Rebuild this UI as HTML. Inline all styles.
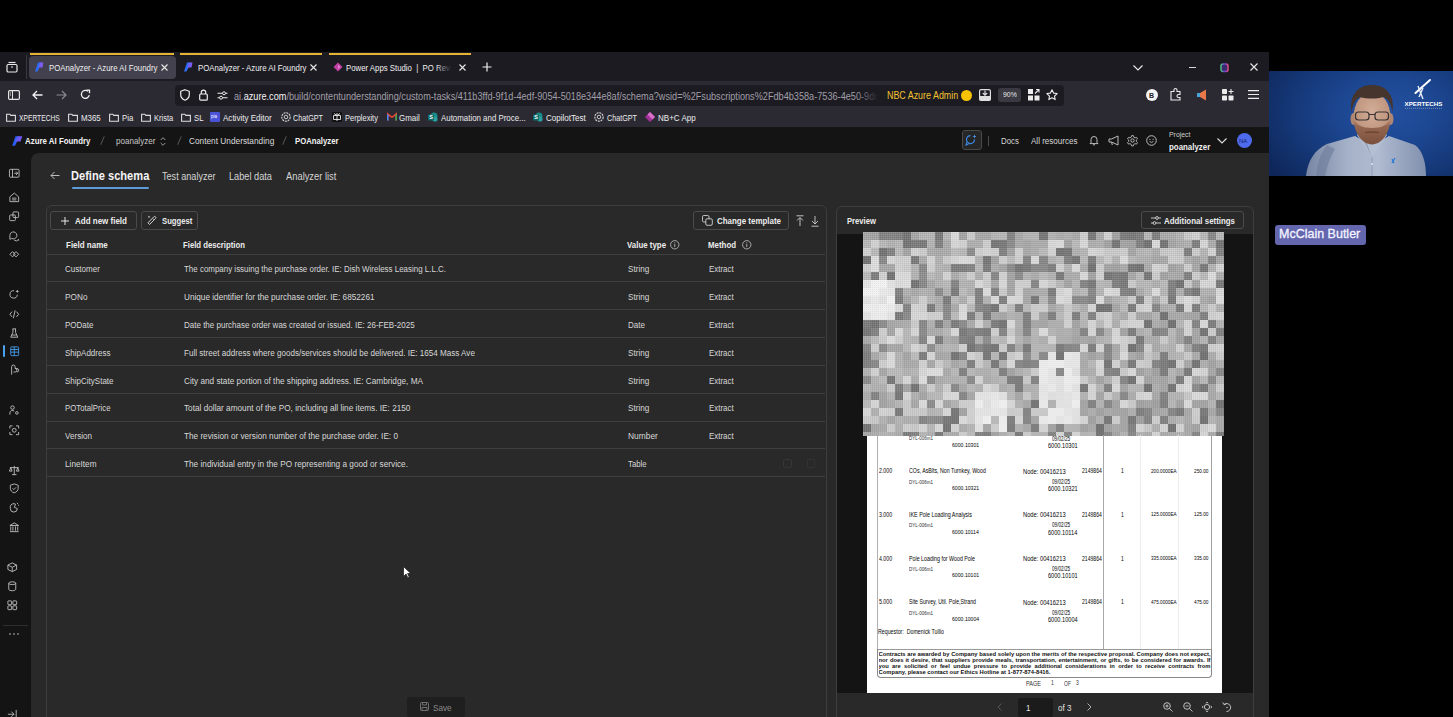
<!DOCTYPE html>
<html><head><meta charset="utf-8">
<style>
*{margin:0;padding:0;box-sizing:border-box}
html,body{width:1453px;height:717px;overflow:hidden;background:#000;font-family:"Liberation Sans",sans-serif;color:#d6d6d6}
.a{position:absolute}
.t{position:absolute;white-space:nowrap;line-height:1;transform-origin:0 50%}
svg{position:absolute;overflow:visible}
.card{position:absolute;border:1px solid #3e3e3e;border-radius:6px;background:#292929}
.btn{position:absolute;border:1px solid #4a4a4a;border-radius:3px}
</style></head><body>
<div class="a" style="left:0px;top:52px;width:1269px;height:29px;background:#1c1b22;"></div>
<div class="a" style="left:0px;top:81px;width:1269px;height:46px;background:#2b2a33;"></div>
<div class="a" style="left:0px;top:127px;width:1269px;height:40px;background:#141414;"></div>
<div class="a" style="left:0px;top:153px;width:31px;height:564px;background:#141414;"></div>
<div class="a" style="left:31px;top:153px;width:1238px;height:564px;background:#292929;border-top-left-radius:8px"></div>
<div class="a" style="left:0px;top:52px;width:27px;height:29px;background:#1a1920;"></div>
<div class="a" style="left:26px;top:55px;width:1px;height:24px;background:#3a3940;"></div>
<svg style="left:6px;top:61px" width="12" height="12" viewBox="0 0 12 12"><rect x="1" y="3.5" width="10" height="7.5" rx="1.2" fill="none" stroke="#e6e6e6" stroke-width="1.2"/><path d="M2.5 1.5h7" stroke="#e6e6e6" stroke-width="1.2"/><path d="M5 6h2" stroke="#e6e6e6" stroke-width="1.2"/></svg>
<div class="a" style="left:29px;top:56px;width:147px;height:23px;background:#42414d;border-radius:4px"></div>
<div class="a" style="left:30px;top:53px;width:144px;height:2px;background:#e5b334;"></div>
<div class="a" style="left:180px;top:53px;width:142px;height:2px;background:#e5b334;"></div>
<div class="a" style="left:329px;top:53px;width:142px;height:2px;background:#e5b334;"></div>
<svg style="left:35px;top:62px" width="10" height="10" viewBox="0 0 10 10"><path d="M3 0.5h4l-4.5 9h-2.5z" fill="#2f6cf6"/><path d="M5 0.5h3.5l-1 5h-4z" fill="#7b5cf0"/></svg>
<div class="t" style="left:48.5px;top:64px;font-size:9.00px;font-weight:400;color:#f0f0f0;transform:scaleX(0.8666666666666667);">POAnalyzer - Azure AI Foundry</div>
<svg style="left:161px;top:64px" width="7" height="7" viewBox="0 0 7 7"><path d="M0.5 0.5l6 6M6.5 0.5l-6 6" stroke="#e8e8e8" stroke-width="1.1"/></svg>
<svg style="left:184px;top:62px" width="10" height="10" viewBox="0 0 10 10"><path d="M3 0.5h4l-4.5 9h-2.5z" fill="#2f6cf6"/><path d="M5 0.5h3.5l-1 5h-4z" fill="#7b5cf0"/></svg>
<div class="t" style="left:197.5px;top:64px;font-size:9.00px;font-weight:400;color:#f0f0f0;transform:scaleX(0.8666666666666667);">POAnalyzer - Azure AI Foundry</div>
<svg style="left:310px;top:64px" width="7" height="7" viewBox="0 0 7 7"><path d="M0.5 0.5l6 6M6.5 0.5l-6 6" stroke="#e8e8e8" stroke-width="1.1"/></svg>
<svg style="left:333px;top:62px" width="10" height="10" viewBox="0 0 10 10"><path d="M5 0.5l4.5 4.5-4.5 4.5-4.5-4.5z" fill="#c03fa0"/><path d="M5 2.5l2.5 2.5-2.5 2.5z" fill="#e27ad0"/></svg>
<div class="t" style="left:346px;top:64px;font-size:9.00px;font-weight:400;color:#f0f0f0;transform:scaleX(0.8666666666666667);width:125px;overflow:hidden">Power Apps Studio &nbsp;|&nbsp; PO Review</div>
<div class="a" style="left:436px;top:57px;width:22px;height:20px;background:linear-gradient(90deg,rgba(28,27,34,0),#1c1b22 70%);"></div>
<svg style="left:459px;top:64px" width="7" height="7" viewBox="0 0 7 7"><path d="M0.5 0.5l6 6M6.5 0.5l-6 6" stroke="#e8e8e8" stroke-width="1.1"/></svg>
<svg style="left:482px;top:62px" width="10" height="10" viewBox="0 0 10 10"><path d="M5 0.5v9M0.5 5h9" stroke="#f0f0f0" stroke-width="1.2"/></svg>
<svg style="left:1133px;top:64.5px" width="9" height="5.5" viewBox="0 0 9 5.5"><path d="M0.5 0.5l4.5 4.5 4.5-4.5" fill="none" stroke="#e8e8e8" stroke-width="1.2"/></svg>
<div class="a" style="left:1189px;top:66.5px;width:7px;height:1.2px;background:#d8d8d8;"></div>
<svg style="left:1219.5px;top:62.5px" width="9" height="9" viewBox="0 0 9 9"><defs><linearGradient id="rg" x1="0" y1="0" x2="1" y2="0"><stop offset="0" stop-color="#50d080"/><stop offset="0.5" stop-color="#6040e0"/><stop offset="1" stop-color="#f05080"/></linearGradient></defs><rect x="1" y="1" width="7" height="7.5" rx="2" fill="#3a2a70" stroke="url(#rg)" stroke-width="1.4"/></svg>
<svg style="left:1250px;top:63px" width="8" height="8" viewBox="0 0 8 8"><path d="M0.5 0.5l7 7M7.5 0.5l-7 7" stroke="#e8e8e8" stroke-width="1.1"/></svg>
<svg style="left:8px;top:90px" width="12" height="10" viewBox="0 0 12 10"><rect x="0.6" y="0.6" width="10.8" height="8.8" rx="1.2" fill="none" stroke="#e6e6e6" stroke-width="1.2"/><path d="M4.5 1v8M2 3h1M2 5h1" stroke="#e6e6e6" stroke-width="1"/></svg>
<svg style="left:32px;top:90px" width="11" height="10" viewBox="0 0 11 10"><path d="M10.5 5H1M5 1L1 5l4 4" fill="none" stroke="#f2f2f2" stroke-width="1.3"/></svg>
<svg style="left:56px;top:90px" width="11" height="10" viewBox="0 0 11 10"><path d="M0.5 5H10M6 1l4 4-4 4" fill="none" stroke="#8a8990" stroke-width="1.2"/></svg>
<svg style="left:80px;top:89px" width="11" height="11" viewBox="0 0 11 11"><path d="M9.3 6.2A4 4 0 1 1 8 2.3" fill="none" stroke="#f0f0f0" stroke-width="1.3"/><path d="M6.5 1.2h3v3" fill="none" stroke="#f0f0f0" stroke-width="1.3"/></svg>
<div class="a" style="left:175px;top:85px;width:889px;height:21px;background:#1c1b22;border-radius:4px"></div>
<svg style="left:180px;top:89px" width="10" height="12" viewBox="0 0 10 12"><path d="M5 0.7L9.3 2.3V5.5C9.3 8.3 7.3 10.3 5 11.2 2.7 10.3 0.7 8.3 0.7 5.5V2.3z" fill="none" stroke="#ececec" stroke-width="1.2"/></svg>
<svg style="left:199px;top:89px" width="9" height="12" viewBox="0 0 9 12"><rect x="0.7" y="5" width="7.6" height="6.2" rx="1" fill="none" stroke="#ececec" stroke-width="1.2"/><path d="M2.3 5V3.3a2.2 2.2 0 0 1 4.4 0V5" fill="none" stroke="#ececec" stroke-width="1.2"/></svg>
<svg style="left:217px;top:91px" width="11" height="9" viewBox="0 0 11 9"><path d="M0.5 2.3h5M8.5 2.3h2M0.5 6.7h2M5.5 6.7h5" stroke="#ececec" stroke-width="1.1"/><circle cx="7" cy="2.3" r="1.5" fill="none" stroke="#ececec" stroke-width="1"/><circle cx="4" cy="6.7" r="1.5" fill="none" stroke="#ececec" stroke-width="1"/></svg>
<div class="t" style="left:234px;top:91px;font-size:10.52px;font-weight:400;color:#a09fa7;transform:scaleX(0.87);">ai.<span style="color:#f4f4f4">azure.com</span>/build/contentunderstanding/custom-tasks/411b3ffd-9f1d-4edf-9054-5018e344e8af/schema?wsid=%2Fsubscriptions%2Fdb4b358a-7536-4e50-9dc</div>
<div class="a" style="left:856px;top:87px;width:30px;height:17px;background:linear-gradient(90deg,rgba(28,27,34,0),#1c1b22 75%);"></div>
<div class="t" style="left:886.5px;top:91px;font-size:10.23px;font-weight:400;color:#f2c230;transform:scaleX(0.87);">NBC Azure Admin</div>
<div class="a" style="left:960.5px;top:89.5px;width:11px;height:11px;border-radius:50%;background:#f7c200"></div>
<svg style="left:979px;top:89px" width="12" height="12" viewBox="0 0 12 12"><rect x="0.6" y="0.6" width="10.8" height="10.8" rx="1.5" fill="none" stroke="#e0e0e0" stroke-width="1.2"/><rect x="0.6" y="7" width="10.8" height="4.4" fill="#e0e0e0"/><path d="M6 1.5v4.5M3.8 4l2.2 2.2 2.2-2.2" fill="none" stroke="#e0e0e0" stroke-width="1.2"/></svg>
<div class="a" style="left:998px;top:88px;width:23px;height:14px;background:#3b3a43;border-radius:3px"></div>
<div class="t" style="left:1002.5px;top:91px;font-size:7.93px;font-weight:400;color:#e8e8e8;transform:scaleX(0.87);">90%</div>
<svg style="left:1028px;top:89px" width="12" height="12" viewBox="0 0 12 12"><rect x="0" y="0" width="5" height="5" fill="#ececec"/><rect x="0" y="6.5" width="5" height="5" fill="#ececec"/><rect x="6.5" y="6.5" width="5" height="5" fill="#ececec"/><path d="M7 4.5l4-4M8 0.5h3v3" fill="none" stroke="#ececec" stroke-width="1.1"/></svg>
<svg style="left:1046px;top:89px" width="12" height="12" viewBox="0 0 12 12"><path d="M6 0.8l1.55 3.3 3.6.45-2.65 2.5.7 3.55L6 8.85 2.8 10.6l.7-3.55L.85 4.55l3.6-.45z" fill="none" stroke="#ececec" stroke-width="1.1" stroke-linejoin="round"/></svg>
<div class="a" style="left:1146px;top:89px;width:12px;height:12px;border-radius:50%;background:#f4f4f4"></div>
<div class="t" style="left:1149px;top:92px;font-size:7.00px;font-weight:700;color:#222;transform:scaleX(1);">B</div>
<svg style="left:1170px;top:88px" width="12" height="13" viewBox="0 0 12 13"><path d="M1 3.5h3V2a1.5 1.5 0 0 1 3 0v1.5h3v3H8.5a1.5 1.5 0 0 0 0 3H10V12H1z" fill="none" stroke="#ececec" stroke-width="1.1"/></svg>
<svg style="left:1196px;top:89px" width="12" height="12" viewBox="0 0 12 12"><path d="M1 4h3l6-3.5v11L4 8H1z" fill="#e8774a"/><path d="M1 4h3v4H1z" fill="#4aa3d8"/></svg>
<svg style="left:1222px;top:89px" width="12" height="12" viewBox="0 0 12 12"><rect x="0" y="0" width="5" height="5" rx="0.8" fill="#ececec"/><rect x="0" y="6.5" width="5" height="5" rx="0.8" fill="#ececec"/><rect x="6.5" y="6.5" width="5" height="5" rx="0.8" fill="#ececec"/><path d="M9 0v5M6.5 2.5h5" stroke="#ececec" stroke-width="1.1"/></svg>
<svg style="left:1248px;top:90px" width="11" height="9" viewBox="0 0 11 9"><path d="M0 0.7h11M0 4.5h11M0 8.3h11" stroke="#ececec" stroke-width="1.2"/></svg>
<svg style="left:6px;top:113px" width="10" height="9" viewBox="0 0 10 9"><path d="M0.6 1.2h3.2l1 1.2h4.6v5.9H0.6z" fill="none" stroke="#dedede" stroke-width="1.1"/></svg>
<div class="t" style="left:19px;top:114px;font-size:9.20px;font-weight:400;color:#ececec;transform:scaleX(0.7282608695652175);">XPERTECHS</div>
<svg style="left:68px;top:113px" width="10" height="9" viewBox="0 0 10 9"><path d="M0.6 1.2h3.2l1 1.2h4.6v5.9H0.6z" fill="none" stroke="#dedede" stroke-width="1.1"/></svg>
<div class="t" style="left:81px;top:114px;font-size:9.20px;font-weight:400;color:#ececec;transform:scaleX(0.8586956521739132);">M365</div>
<svg style="left:109px;top:113px" width="10" height="9" viewBox="0 0 10 9"><path d="M0.6 1.2h3.2l1 1.2h4.6v5.9H0.6z" fill="none" stroke="#dedede" stroke-width="1.1"/></svg>
<div class="t" style="left:122px;top:114px;font-size:9.20px;font-weight:400;color:#ececec;transform:scaleX(0.8478260869565218);">Pia</div>
<svg style="left:141px;top:113px" width="10" height="9" viewBox="0 0 10 9"><path d="M0.6 1.2h3.2l1 1.2h4.6v5.9H0.6z" fill="none" stroke="#dedede" stroke-width="1.1"/></svg>
<div class="t" style="left:154px;top:114px;font-size:9.20px;font-weight:400;color:#ececec;transform:scaleX(0.8152173913043479);">Krista</div>
<svg style="left:181px;top:113px" width="10" height="9" viewBox="0 0 10 9"><path d="M0.6 1.2h3.2l1 1.2h4.6v5.9H0.6z" fill="none" stroke="#dedede" stroke-width="1.1"/></svg>
<div class="t" style="left:194px;top:114px;font-size:9.20px;font-weight:400;color:#ececec;transform:scaleX(0.8478260869565218);">SL</div>
<div class="a" style="left:210px;top:112px;width:10px;height:10px;background:#4a52d8;border-radius:1px"></div>
<div class="t" style="left:211px;top:115px;font-size:4.50px;font-weight:400;color:#fff;transform:scaleX(1);">pia</div>
<div class="t" style="left:223px;top:114px;font-size:9.20px;font-weight:400;color:#ececec;transform:scaleX(0.8750000000000001);">Activity Editor</div>
<svg style="left:281px;top:112px" width="10" height="10" viewBox="0 0 10 10"><circle cx="5" cy="5" r="4.2" fill="none" stroke="#d8d8d8" stroke-width="1.1" stroke-dasharray="2 0.8"/><circle cx="5" cy="5" r="1.8" fill="none" stroke="#d8d8d8" stroke-width="0.9"/></svg>
<div class="t" style="left:293px;top:114px;font-size:9.20px;font-weight:400;color:#ececec;transform:scaleX(0.782608695652174);">ChatGPT</div>
<svg style="left:332px;top:112px" width="10" height="10" viewBox="0 0 10 10"><rect x="0" y="0" width="10" height="10" rx="1" fill="#111"/><path d="M5 1v8M1.5 3.5h7v4h-7zM2 1.5l3 2 3-2" fill="none" stroke="#e8e8e8" stroke-width="0.9"/></svg>
<div class="t" style="left:345px;top:114px;font-size:9.20px;font-weight:400;color:#ececec;transform:scaleX(0.8152173913043479);">Perplexity</div>
<svg style="left:387px;top:113px" width="10" height="8" viewBox="0 0 10 8"><path d="M0.8 7.5V1l4.2 3.3L9.2 1v6.5" fill="none" stroke="#ea4335" stroke-width="1.6"/><path d="M0.8 7.5V1.5" stroke="#4285f4" stroke-width="1.6"/><path d="M9.2 7.5V1.5" stroke="#34a853" stroke-width="1.6"/></svg>
<div class="t" style="left:399px;top:114px;font-size:9.20px;font-weight:400;color:#ececec;transform:scaleX(0.8695652173913044);">Gmail</div>
<svg style="left:428px;top:112px" width="10" height="10" viewBox="0 0 10 10"><circle cx="6" cy="4" r="3.5" fill="#1a8a8a"/><circle cx="7" cy="7" r="2.6" fill="#2aa0a0"/><rect x="0" y="2.5" width="6" height="6" rx="0.8" fill="#0b6a6a"/><text x="1.3" y="7.3" font-size="5.5" font-family="Liberation Sans" font-weight="700" fill="#fff">S</text></svg>
<div class="t" style="left:441px;top:114px;font-size:9.20px;font-weight:400;color:#ececec;transform:scaleX(0.8586956521739132);">Automation and Proce...</div>
<svg style="left:533px;top:112px" width="10" height="10" viewBox="0 0 10 10"><circle cx="6" cy="4" r="3.5" fill="#1a8a8a"/><circle cx="7" cy="7" r="2.6" fill="#2aa0a0"/><rect x="0" y="2.5" width="6" height="6" rx="0.8" fill="#0b6a6a"/><text x="1.3" y="7.3" font-size="5.5" font-family="Liberation Sans" font-weight="700" fill="#fff">S</text></svg>
<div class="t" style="left:546px;top:114px;font-size:9.20px;font-weight:400;color:#ececec;transform:scaleX(0.8750000000000001);">CopilotTest</div>
<svg style="left:594px;top:112px" width="10" height="10" viewBox="0 0 10 10"><circle cx="5" cy="5" r="4.2" fill="none" stroke="#d8d8d8" stroke-width="1.1" stroke-dasharray="2 0.8"/><circle cx="5" cy="5" r="1.8" fill="none" stroke="#d8d8d8" stroke-width="0.9"/></svg>
<div class="t" style="left:607px;top:114px;font-size:9.20px;font-weight:400;color:#ececec;transform:scaleX(0.782608695652174);">ChatGPT</div>
<svg style="left:645px;top:112px" width="10" height="10" viewBox="0 0 10 10"><path d="M5 0l5 5-5 5-5-5z" fill="#a3309b"/><path d="M5 0l5 5-2.5 2.5L2.5 2.5z" fill="#d670c8"/></svg>
<div class="t" style="left:658px;top:114px;font-size:9.20px;font-weight:400;color:#ececec;transform:scaleX(0.8750000000000001);">NB+C App</div>
<svg style="left:12px;top:136px" width="11" height="10" viewBox="0 0 11 10"><path d="M3.5 0.3h4.2L3 9.7H0.2z" fill="#2c5ef5"/><path d="M5.8 0.3h4.5L8.6 5.6H3.2z" fill="#6f57f2"/></svg>
<div class="t" style="left:25.3px;top:137px;font-size:9.20px;font-weight:700;color:#f2f2f2;transform:scaleX(0.8586956521739132);">Azure AI Foundry</div>
<svg style="left:100px;top:136px" width="5" height="9" viewBox="0 0 5 9"><path d="M4.3 0.3L0.7 8.7" stroke="#585858" stroke-width="1"/></svg>
<div class="t" style="left:115.6px;top:137px;font-size:9.20px;font-weight:400;color:#c9c9c9;transform:scaleX(0.8750000000000001);">poanalyzer</div>
<svg style="left:159.5px;top:137px" width="6" height="9" viewBox="0 0 6 9"><path d="M0.7 3L3 0.7l2.3 2.3M0.7 6L3 8.3l2.3-2.3" fill="none" stroke="#a8a8a8" stroke-width="0.9"/></svg>
<svg style="left:176.5px;top:136px" width="5" height="9" viewBox="0 0 5 9"><path d="M4.3 0.3L0.7 8.7" stroke="#585858" stroke-width="1"/></svg>
<div class="t" style="left:188.5px;top:137px;font-size:9.20px;font-weight:400;color:#dcdcdc;transform:scaleX(0.9021739130434784);">Content Understanding</div>
<svg style="left:282px;top:136px" width="5" height="9" viewBox="0 0 5 9"><path d="M4.3 0.3L0.7 8.7" stroke="#585858" stroke-width="1"/></svg>
<div class="t" style="left:295px;top:137px;font-size:9.20px;font-weight:700;color:#f2f2f2;transform:scaleX(0.8423913043478262);">POAnalyzer</div>
<div class="a" style="left:962px;top:130px;width:19.5px;height:20px;background:#262626;border:1px solid #4a4a4a;border-radius:3px"></div>
<svg style="left:965px;top:134px" width="13" height="12" viewBox="0 0 13 12"><path d="M9.5 5.5A4 4 0 1 1 5.5 1.6" fill="none" stroke="#3a86e0" stroke-width="1.2"/><path d="M1.8 8.5L1 11l2.6-0.9" fill="none" stroke="#3a86e0" stroke-width="1.1"/><path d="M9.5 0.5l0.6 1.4 1.4 0.6-1.4 0.6-0.6 1.4-0.6-1.4-1.4-0.6 1.4-0.6z" fill="#4f9af0"/></svg>
<div class="a" style="left:988px;top:136px;width:1px;height:10px;background:#4a4a4a;"></div>
<div class="t" style="left:1001px;top:137px;font-size:9.20px;font-weight:400;color:#d6d6d6;transform:scaleX(0.8586956521739132);">Docs</div>
<div class="t" style="left:1031px;top:137px;font-size:9.20px;font-weight:400;color:#d6d6d6;transform:scaleX(0.8750000000000001);">All resources</div>
<svg style="left:1089px;top:135px" width="10" height="11" viewBox="0 0 10 11"><path d="M2 7.6V4.5a3 3 0 0 1 6 0v3.1l1 1H1z" fill="none" stroke="#bcbcbc" stroke-width="1"/><path d="M4 9.8h2" stroke="#bcbcbc" stroke-width="1"/></svg>
<svg style="left:1108px;top:135px" width="12" height="11" viewBox="0 0 12 11"><path d="M1 4h2.5L10 1v9L3.5 7H1z" fill="none" stroke="#bcbcbc" stroke-width="1"/><path d="M3.5 7l0.8 3" stroke="#bcbcbc" stroke-width="1"/></svg>
<svg style="left:1127px;top:135px" width="11" height="11" viewBox="0 0 11 11"><circle cx="5.5" cy="5.5" r="1.7" fill="none" stroke="#bcbcbc" stroke-width="1"/><path d="M4.6 0.6h1.8l.35 1.5 1.3.75 1.5-.45.9 1.55-1.1 1.05v1.5l1.1 1.05-.9 1.55-1.5-.45-1.3.75-.35 1.5H4.6l-.35-1.5-1.3-.75-1.5.45-.9-1.55 1.1-1.05v-1.5L.55 3.95l.9-1.55 1.5.45 1.3-.75z" fill="none" stroke="#bcbcbc" stroke-width="0.9" stroke-linejoin="round"/></svg>
<svg style="left:1146px;top:135px" width="11" height="11" viewBox="0 0 11 11"><circle cx="5.5" cy="5.5" r="4.8" fill="none" stroke="#bcbcbc" stroke-width="1"/><circle cx="3.9" cy="4.3" r="0.6" fill="#bcbcbc"/><circle cx="7.1" cy="4.3" r="0.6" fill="#bcbcbc"/><path d="M3.6 6.6q1.9 1.5 3.8 0" fill="none" stroke="#bcbcbc" stroke-width="0.9"/></svg>
<div class="t" style="left:1168.5px;top:131px;font-size:7.93px;font-weight:400;color:#d0d0d0;transform:scaleX(0.87);">Project</div>
<div class="t" style="left:1168.5px;top:143px;font-size:9.08px;font-weight:700;color:#f0f0f0;transform:scaleX(0.87);">poanalyzer</div>
<svg style="left:1217px;top:138px" width="10" height="6" viewBox="0 0 10 6"><path d="M0.5 0.5l4.5 4.5 4.5-4.5" fill="none" stroke="#e0e0e0" stroke-width="1.1"/></svg>
<div class="a" style="left:1236.5px;top:133px;width:15px;height:15px;border-radius:50%;background:#4f6bed"></div>
<div class="t" style="left:1239px;top:138px;font-size:6.00px;font-weight:400;color:#10205a;transform:scaleX(1);">NA</div>
<svg style="left:9.05px;top:168.05px" width="10.5" height="10.5" viewBox="0 0 12 12"><rect x="0.5" y="1.5" width="11" height="9" rx="1" fill="none" stroke="#c4c4c4" stroke-width="1"/><path d="M4 1.5v9M6 6h4M8 4l2 2-2 2" fill="none" stroke="#c4c4c4" stroke-width="1"/></svg>
<svg style="left:9.05px;top:192.05px" width="10.5" height="10.5" viewBox="0 0 12 12"><path d="M1 5.5L6 1.2l5 4.3V11H1z" fill="none" stroke="#c4c4c4" stroke-width="1"/><path d="M3.5 7h5M3.5 9h5" fill="none" stroke="#c4c4c4" stroke-width="1"/></svg>
<svg style="left:9.05px;top:211.35px" width="10.5" height="10.5" viewBox="0 0 12 12"><rect x="0.8" y="4.5" width="6.5" height="6.5" rx="1" fill="none" stroke="#c4c4c4" stroke-width="1"/><rect x="4.5" y="1" width="6.5" height="6.5" rx="1" fill="none" stroke="#c4c4c4" stroke-width="1"/></svg>
<svg style="left:9.05px;top:230.55px" width="10.5" height="10.5" viewBox="0 0 12 12"><path d="M1 5a4 4 0 1 1 2 3.5L1 9.5z" fill="none" stroke="#c4c4c4" stroke-width="1"/><path d="M6 10.5a3.5 3.5 0 0 0 5-1L11 11" fill="none" stroke="#c4c4c4" stroke-width="1"/></svg>
<svg style="left:9.05px;top:249.25px" width="10.5" height="10.5" viewBox="0 0 12 12"><path d="M1 6l3-3 3 3-3 3zM5 6l3-3 3 3-3 3z" fill="none" stroke="#c4c4c4" stroke-width="1"/></svg>
<svg style="left:9.05px;top:289.35px" width="10.5" height="10.5" viewBox="0 0 12 12"><path d="M9.5 6.5A4.2 4.2 0 1 1 5.8 2" fill="none" stroke="#c4c4c4" stroke-width="1"/><path d="M9.5 0.8l.6 1.3 1.3.6-1.3.6-.6 1.3-.6-1.3-1.3-.6 1.3-.6z" fill="#c4c4c4"/></svg>
<svg style="left:9.05px;top:308.55px" width="10.5" height="10.5" viewBox="0 0 12 12"><path d="M3.5 3L1 6l2.5 3M8.5 3L11 6 8.5 9M7 1.5L5 10.5" fill="none" stroke="#c4c4c4" stroke-width="1"/></svg>
<svg style="left:9.05px;top:327.75px" width="10.5" height="10.5" viewBox="0 0 12 12"><path d="M4 1h4M4.5 1v4L2 10.5h8L7.5 5V1" fill="none" stroke="#c4c4c4" stroke-width="1"/><path d="M3 8h6" fill="none" stroke="#c4c4c4" stroke-width="1"/></svg>
<svg style="left:9.05px;top:346.05px" width="10.5" height="10.5" viewBox="0 0 12 12"><rect x="2" y="1" width="9" height="10" rx="1" fill="none" stroke="#4aa0f0" stroke-width="1"/><path d="M2 4h9M2 7h9M6 1v10" fill="none" stroke="#4aa0f0" stroke-width="1"/></svg>
<div class="a" style="left:3px;top:345px;width:1.5px;height:12px;background:#4aa0f0;border-radius:1px"></div>
<svg style="left:9.05px;top:364.75px" width="10.5" height="10.5" viewBox="0 0 12 12"><path d="M3 11V2a2 2 0 0 1 4 0v2a2 2 0 0 1 0 4H5M7 4h2a2 2 0 0 1 0 4" fill="none" stroke="#c4c4c4" stroke-width="1"/></svg>
<svg style="left:9.05px;top:405.25px" width="10.5" height="10.5" viewBox="0 0 12 12"><circle cx="4" cy="3" r="2" fill="none" stroke="#c4c4c4" stroke-width="1"/><path d="M1 11v-2a3 3 0 0 1 5-2" fill="none" stroke="#c4c4c4" stroke-width="1"/><circle cx="9" cy="9" r="1.5" fill="none" stroke="#c4c4c4" stroke-width="1"/></svg>
<svg style="left:9.05px;top:424.75px" width="10.5" height="10.5" viewBox="0 0 12 12"><path d="M1 4V1h3M8 1h3v3M11 8v3H8M4 11H1V8" fill="none" stroke="#c4c4c4" stroke-width="1"/><circle cx="6" cy="6" r="2.2" fill="none" stroke="#c4c4c4" stroke-width="1"/></svg>
<svg style="left:9.05px;top:464.75px" width="10.5" height="10.5" viewBox="0 0 12 12"><path d="M6 1v10M1 3h10M2 3l-1.5 4h3zM10 3l-1.5 4h3zM3.5 11h5" fill="none" stroke="#c4c4c4" stroke-width="1"/></svg>
<svg style="left:9.05px;top:482.75px" width="10.5" height="10.5" viewBox="0 0 12 12"><path d="M6 1l4.5 1.6v3.4c0 2.7-2 4.4-4.5 5.2-2.5-.8-4.5-2.5-4.5-5.2V2.6z" fill="none" stroke="#c4c4c4" stroke-width="1"/><path d="M4 6l1.5 1.5L8 5" fill="none" stroke="#c4c4c4" stroke-width="1"/></svg>
<svg style="left:9.05px;top:502.35px" width="10.5" height="10.5" viewBox="0 0 12 12"><path d="M1.5 5a4 4 0 0 1 6-2.5L6 6l3.5 1.5a4 4 0 0 1-8 0z" fill="none" stroke="#c4c4c4" stroke-width="1"/><path d="M9 1l1.5 1.5M10.5 4l1-.5" fill="none" stroke="#c4c4c4" stroke-width="1"/></svg>
<svg style="left:9.05px;top:521.55px" width="10.5" height="10.5" viewBox="0 0 12 12"><path d="M6 1l5 3H1zM2 5v5M4.5 5v5M7.5 5v5M10 5v5M1 11h10" fill="none" stroke="#c4c4c4" stroke-width="1"/></svg>
<svg style="left:7.35px;top:561.75px" width="10.5" height="10.5" viewBox="0 0 12 12"><path d="M6 1l5 2.5v5L6 11 1 8.5v-5zM1 3.5L6 6l5-2.5M6 6v5" fill="none" stroke="#c4c4c4" stroke-width="1"/></svg>
<svg style="left:7.35px;top:580.75px" width="10.5" height="10.5" viewBox="0 0 12 12"><ellipse cx="6" cy="2.5" rx="4" ry="1.6" fill="none" stroke="#c4c4c4" stroke-width="1"/><path d="M2 2.5v7c0 .9 1.8 1.6 4 1.6s4-.7 4-1.6v-7" fill="none" stroke="#c4c4c4" stroke-width="1"/></svg>
<svg style="left:7.35px;top:599.75px" width="10.5" height="10.5" viewBox="0 0 12 12"><rect x="1" y="1" width="4.3" height="4.3" rx="0.6" fill="none" stroke="#c4c4c4" stroke-width="1"/><rect x="6.7" y="1" width="4.3" height="4.3" rx="0.6" fill="none" stroke="#c4c4c4" stroke-width="1"/><rect x="1" y="6.7" width="4.3" height="4.3" rx="0.6" fill="none" stroke="#c4c4c4" stroke-width="1"/><rect x="6.7" y="6.7" width="4.3" height="4.3" rx="0.6" fill="none" stroke="#c4c4c4" stroke-width="1"/></svg>
<div class="a" style="left:3px;top:625px;width:25px;height:1px;background:#2e2e2e;"></div>
<svg style="left:9px;top:633px" width="11" height="2" viewBox="0 0 11 2"><circle cx="1" cy="1" r="0.8" fill="#c4c4c4"/><circle cx="5" cy="1" r="0.8" fill="#c4c4c4"/><circle cx="9" cy="1" r="0.8" fill="#c4c4c4"/></svg>
<svg style="left:7.35px;top:709.25px" width="10.5" height="10.5" viewBox="0 0 12 12"><path d="M1 6h7M5 3l3 3-3 3M10.5 1v10" fill="none" stroke="#c4c4c4" stroke-width="1"/></svg>
<svg style="left:50px;top:171px" width="10" height="9" viewBox="0 0 10 9"><path d="M9.5 4.5H1M4.5 1L1 4.5 4.5 8" fill="none" stroke="#bdbdbd" stroke-width="1"/></svg>
<div class="t" style="left:71px;top:170px;font-size:12.76px;font-weight:700;color:#f4f4f4;transform:scaleX(0.87);">Define schema</div>
<div class="a" style="left:71.5px;top:186.5px;width:77px;height:2px;background:#5c9ad8;border-radius:1px"></div>
<div class="t" style="left:162px;top:171px;font-size:10.60px;font-weight:400;color:#d4d4d4;transform:scaleX(0.8584905660377359);">Test analyzer</div>
<div class="t" style="left:229px;top:171px;font-size:10.60px;font-weight:400;color:#d4d4d4;transform:scaleX(0.8679245283018867);">Label data</div>
<div class="t" style="left:285.6px;top:171px;font-size:10.60px;font-weight:400;color:#d4d4d4;transform:scaleX(0.8820754716981132);">Analyzer list</div>
<div class="card" style="left:46px;top:205px;width:780.5px;height:530px"></div>
<div class="btn" style="left:49.5px;top:210.5px;width:87px;height:19.5px"></div>
<svg style="left:61px;top:216.5px" width="8" height="8" viewBox="0 0 8 8"><path d="M4 0v8M0 4h8" stroke="#e6e6e6" stroke-width="1"/></svg>
<div class="t" style="left:75px;top:217px;font-size:9.20px;font-weight:700;color:#ececec;transform:scaleX(0.8695652173913044);">Add new field</div>
<div class="btn" style="left:141px;top:210.5px;width:56.5px;height:19.5px"></div>
<svg style="left:147px;top:215px" width="11" height="11" viewBox="0 0 11 11"><path d="M2.5 9.5L8.5 3.5a1.2 1.2 0 0 0-1.7-1.7L1 7.8z" fill="none" stroke="#dcdcdc" stroke-width="0.9"/><path d="M6 3.5l1.5 1.5" stroke="#dcdcdc" stroke-width="0.9"/><path d="M2 0.5l.4 1 1 .4-1 .4-.4 1-.4-1-1-.4 1-.4z" fill="#dcdcdc"/></svg>
<div class="t" style="left:161.7px;top:217px;font-size:9.20px;font-weight:700;color:#ececec;transform:scaleX(0.8369565217391305);">Suggest</div>
<div class="btn" style="left:693.3px;top:211px;width:96px;height:19px"></div>
<svg style="left:702px;top:215px" width="11" height="11" viewBox="0 0 11 11"><rect x="0.5" y="0.5" width="6.5" height="6.5" rx="1.3" fill="none" stroke="#d0d0d0" stroke-width="0.9"/><rect x="3.8" y="3.8" width="6.5" height="6.5" rx="1.3" fill="#292929" stroke="#d0d0d0" stroke-width="0.9"/></svg>
<div class="t" style="left:716.5px;top:217px;font-size:9.20px;font-weight:700;color:#ececec;transform:scaleX(0.8641304347826088);">Change template</div>
<svg style="left:795.5px;top:214.5px" width="8" height="11" viewBox="0 0 8 11"><path d="M0.5 0.8h7M4 3v8M1 5.5L4 2.5l3 3" fill="none" stroke="#cfcfcf" stroke-width="0.9"/></svg>
<svg style="left:810.5px;top:215.5px" width="8" height="11" viewBox="0 0 8 11"><path d="M0.5 10.2h7M4 0v8M1 5l3 3 3-3" fill="none" stroke="#cfcfcf" stroke-width="0.9"/></svg>
<div class="t" style="left:65.7px;top:241px;font-size:9.20px;font-weight:700;color:#ececec;transform:scaleX(0.8695652173913044);">Field name</div>
<div class="t" style="left:183.3px;top:241px;font-size:9.20px;font-weight:700;color:#ececec;transform:scaleX(0.8423913043478262);">Field description</div>
<div class="t" style="left:627.2px;top:241px;font-size:9.20px;font-weight:700;color:#ececec;transform:scaleX(0.8586956521739132);">Value type</div>
<svg style="left:670px;top:240.3px" width="9.5" height="9.5" viewBox="0 0 10 10"><circle cx="5" cy="5" r="4.4" fill="none" stroke="#bdbdbd" stroke-width="0.9"/><path d="M5 4.2v3.3" stroke="#bdbdbd" stroke-width="0.9"/><circle cx="5" cy="2.8" r="0.55" fill="#bdbdbd"/></svg>
<div class="t" style="left:708.2px;top:241px;font-size:9.20px;font-weight:700;color:#ececec;transform:scaleX(0.8586956521739132);">Method</div>
<svg style="left:741.5px;top:240.3px" width="9.5" height="9.5" viewBox="0 0 10 10"><circle cx="5" cy="5" r="4.4" fill="none" stroke="#bdbdbd" stroke-width="0.9"/><path d="M5 4.2v3.3" stroke="#bdbdbd" stroke-width="0.9"/><circle cx="5" cy="2.8" r="0.55" fill="#bdbdbd"/></svg>
<div class="t" style="left:65px;top:265px;font-size:9.25px;font-weight:400;color:#d8d8d8;transform:scaleX(0.8724324324324325);">Customer</div>
<div class="t" style="left:183.5px;top:265px;font-size:9.25px;font-weight:400;color:#d8d8d8;transform:scaleX(0.8594594594594595);">The company issuing the purchase order. IE: Dish Wireless Leasing L.L.C.</div>
<div class="t" style="left:627.5px;top:265px;font-size:9.25px;font-weight:400;color:#d8d8d8;transform:scaleX(0.8810810810810811);">String</div>
<div class="t" style="left:708.5px;top:265px;font-size:9.25px;font-weight:400;color:#d8d8d8;transform:scaleX(0.8540540540540541);">Extract</div>
<div class="t" style="left:65px;top:293px;font-size:9.25px;font-weight:400;color:#d8d8d8;transform:scaleX(0.892972972972973);">PONo</div>
<div class="t" style="left:183.5px;top:293px;font-size:9.25px;font-weight:400;color:#d8d8d8;transform:scaleX(0.8864864864864864);">Unique identifier for the purchase order. IE: 6852261</div>
<div class="t" style="left:627.5px;top:293px;font-size:9.25px;font-weight:400;color:#d8d8d8;transform:scaleX(0.8810810810810811);">String</div>
<div class="t" style="left:708.5px;top:293px;font-size:9.25px;font-weight:400;color:#d8d8d8;transform:scaleX(0.8540540540540541);">Extract</div>
<div class="t" style="left:65px;top:321px;font-size:9.25px;font-weight:400;color:#d8d8d8;transform:scaleX(0.8659459459459459);">PODate</div>
<div class="t" style="left:183.5px;top:321px;font-size:9.25px;font-weight:400;color:#d8d8d8;transform:scaleX(0.8659459459459459);">Date the purchase order was created or issued. IE: 26-FEB-2025</div>
<div class="t" style="left:627.5px;top:321px;font-size:9.25px;font-weight:400;color:#d8d8d8;transform:scaleX(0.8702702702702704);">Date</div>
<div class="t" style="left:708.5px;top:321px;font-size:9.25px;font-weight:400;color:#d8d8d8;transform:scaleX(0.8540540540540541);">Extract</div>
<div class="t" style="left:65px;top:349px;font-size:9.25px;font-weight:400;color:#d8d8d8;transform:scaleX(0.8670270270270269);">ShipAddress</div>
<div class="t" style="left:183.5px;top:349px;font-size:9.25px;font-weight:400;color:#d8d8d8;transform:scaleX(0.8735135135135135);">Full street address where goods/services should be delivered. IE: 1654 Mass Ave</div>
<div class="t" style="left:627.5px;top:349px;font-size:9.25px;font-weight:400;color:#d8d8d8;transform:scaleX(0.8810810810810811);">String</div>
<div class="t" style="left:708.5px;top:349px;font-size:9.25px;font-weight:400;color:#d8d8d8;transform:scaleX(0.8540540540540541);">Extract</div>
<div class="t" style="left:65px;top:377px;font-size:9.25px;font-weight:400;color:#d8d8d8;transform:scaleX(0.8659459459459459);">ShipCityState</div>
<div class="t" style="left:183.5px;top:377px;font-size:9.25px;font-weight:400;color:#d8d8d8;transform:scaleX(0.8886486486486487);">City and state portion of the shipping address. IE: Cambridge, MA</div>
<div class="t" style="left:627.5px;top:377px;font-size:9.25px;font-weight:400;color:#d8d8d8;transform:scaleX(0.8810810810810811);">String</div>
<div class="t" style="left:708.5px;top:377px;font-size:9.25px;font-weight:400;color:#d8d8d8;transform:scaleX(0.8540540540540541);">Extract</div>
<div class="t" style="left:65px;top:404px;font-size:9.25px;font-weight:400;color:#d8d8d8;transform:scaleX(0.8432432432432432);">POTotalPrice</div>
<div class="t" style="left:183.5px;top:404px;font-size:9.25px;font-weight:400;color:#d8d8d8;transform:scaleX(0.8897297297297297);">Total dollar amount of the PO, including all line items. IE: 2150</div>
<div class="t" style="left:627.5px;top:404px;font-size:9.25px;font-weight:400;color:#d8d8d8;transform:scaleX(0.8810810810810811);">String</div>
<div class="t" style="left:708.5px;top:404px;font-size:9.25px;font-weight:400;color:#d8d8d8;transform:scaleX(0.8540540540540541);">Extract</div>
<div class="t" style="left:65px;top:432px;font-size:9.25px;font-weight:400;color:#d8d8d8;transform:scaleX(0.8745945945945945);">Version</div>
<div class="t" style="left:183.5px;top:432px;font-size:9.25px;font-weight:400;color:#d8d8d8;transform:scaleX(0.8854054054054054);">The revision or version number of the purchase order. IE: 0</div>
<div class="t" style="left:627.5px;top:432px;font-size:9.25px;font-weight:400;color:#d8d8d8;transform:scaleX(0.9081081081081082);">Number</div>
<div class="t" style="left:708.5px;top:432px;font-size:9.25px;font-weight:400;color:#d8d8d8;transform:scaleX(0.8540540540540541);">Extract</div>
<div class="t" style="left:65px;top:460px;font-size:9.25px;font-weight:400;color:#d8d8d8;transform:scaleX(0.8875675675675676);">LineItem</div>
<div class="t" style="left:183.5px;top:460px;font-size:9.25px;font-weight:400;color:#d8d8d8;transform:scaleX(0.8908108108108108);">The individual entry in the PO representing a good or service.</div>
<div class="t" style="left:627.5px;top:460px;font-size:9.25px;font-weight:400;color:#d8d8d8;transform:scaleX(0.8432432432432432);">Table</div>
<div class="a" style="left:47px;top:253.50px;width:778px;height:1px;background:#3f3f3f;"></div>
<div class="a" style="left:47px;top:281.35px;width:778px;height:1px;background:#3f3f3f;"></div>
<div class="a" style="left:47px;top:309.20px;width:778px;height:1px;background:#3f3f3f;"></div>
<div class="a" style="left:47px;top:337.05px;width:778px;height:1px;background:#3f3f3f;"></div>
<div class="a" style="left:47px;top:364.90px;width:778px;height:1px;background:#3f3f3f;"></div>
<div class="a" style="left:47px;top:392.75px;width:778px;height:1px;background:#3f3f3f;"></div>
<div class="a" style="left:47px;top:420.60px;width:778px;height:1px;background:#3f3f3f;"></div>
<div class="a" style="left:47px;top:448.45px;width:778px;height:1px;background:#3f3f3f;"></div>
<div class="a" style="left:47px;top:476.30px;width:778px;height:1px;background:#3f3f3f;"></div>
<div class="a" style="left:783px;top:459px;width:9px;height:9px;border:1px solid #363636;border-radius:2px"></div>
<div class="a" style="left:807px;top:459px;width:8px;height:9px;border:1px solid #323232;border-radius:1px"></div>
<div class="a" style="left:407px;top:697px;width:58px;height:20px;background:#1f1f1f;border-radius:2px"></div>
<svg style="left:420px;top:702px" width="9" height="9" viewBox="0 0 9 9"><rect x="0.5" y="0.5" width="8" height="8" rx="1" fill="none" stroke="#7a7a7a" stroke-width="0.9"/><path d="M2.5 0.5v2.5h4V0.5M2 8.5V5.5h5v3" fill="none" stroke="#7a7a7a" stroke-width="0.9"/></svg>
<div class="t" style="left:433px;top:703px;font-size:9.43px;font-weight:400;color:#8a8a8a;transform:scaleX(0.87);">Save</div>
<svg style="left:403px;top:566px" width="8" height="12" viewBox="0 0 8 12"><path d="M0.5 0.5v10l2.6-2.4 1.7 3.6 1.5-.7-1.7-3.5H7.8z" fill="#fff" stroke="#222" stroke-width="0.8"/></svg>
<div class="card" style="left:835.8px;top:205.6px;width:418px;height:530px"></div>
<div class="t" style="left:846.5px;top:217px;font-size:9.20px;font-weight:700;color:#ececec;transform:scaleX(0.8315217391304349);">Preview</div>
<div class="btn" style="left:1141.4px;top:210.9px;width:102.3px;height:18.6px"></div>
<svg style="left:1150.5px;top:215.5px" width="10" height="9" viewBox="0 0 10 9"><path d="M0 2h4.5M7.5 2H10M0 7h2M5 7h5" stroke="#d8d8d8" stroke-width="0.9"/><circle cx="6" cy="2" r="1.4" fill="none" stroke="#d8d8d8" stroke-width="0.9"/><circle cx="3.5" cy="7" r="1.4" fill="none" stroke="#d8d8d8" stroke-width="0.9"/></svg>
<div class="t" style="left:1164.3px;top:217px;font-size:9.20px;font-weight:700;color:#ececec;transform:scaleX(0.8586956521739132);">Additional settings</div>
<div class="a" style="left:837px;top:234px;width:416px;height:459px;background:#141414;"></div>
<div class="a" style="left:867px;top:234px;width:355px;height:459px;background:#ffffff;"></div>
<svg width="0" height="0" style="left:0;top:0"><defs><pattern id="dots" width="2" height="2" patternUnits="userSpaceOnUse"><rect x="0" y="0" width="1" height="1" fill="rgba(255,255,255,0.18)"/><rect x="1" y="1" width="1" height="1" fill="rgba(0,0,0,0.10)"/></pattern></defs></svg>
<svg style="left:863px;top:232px" width="361" height="203.5" viewBox="0 0 360 203" preserveAspectRatio="none" shape-rendering="crispEdges"><rect x="0" y="0" width="8" height="8" fill="#a6a6a6"/><rect x="8" y="0" width="8" height="8" fill="#a3a3a3"/><rect x="16" y="0" width="8" height="8" fill="#818181"/><rect x="24" y="0" width="8" height="8" fill="#828282"/><rect x="32" y="0" width="8" height="8" fill="#808080"/><rect x="40" y="0" width="8" height="8" fill="#727272"/><rect x="48" y="0" width="8" height="8" fill="#a4a4a4"/><rect x="56" y="0" width="8" height="8" fill="#b3b3b3"/><rect x="64" y="0" width="8" height="8" fill="#b4b4b4"/><rect x="72" y="0" width="8" height="8" fill="#777777"/><rect x="80" y="0" width="8" height="8" fill="#b4b4b4"/><rect x="88" y="0" width="8" height="8" fill="#dadada"/><rect x="96" y="0" width="8" height="8" fill="#a3a3a3"/><rect x="104" y="0" width="8" height="8" fill="#c9c9c9"/><rect x="112" y="0" width="8" height="8" fill="#a6a6a6"/><rect x="120" y="0" width="8" height="8" fill="#a6a6a6"/><rect x="128" y="0" width="8" height="8" fill="#b4b4b4"/><rect x="136" y="0" width="8" height="8" fill="#b7b7b7"/><rect x="144" y="0" width="8" height="8" fill="#828282"/><rect x="152" y="0" width="8" height="8" fill="#a8a8a8"/><rect x="160" y="0" width="8" height="8" fill="#b3b3b3"/><rect x="168" y="0" width="8" height="8" fill="#b4b4b4"/><rect x="176" y="0" width="8" height="8" fill="#767676"/><rect x="184" y="0" width="8" height="8" fill="#b3b3b3"/><rect x="192" y="0" width="8" height="8" fill="#acacac"/><rect x="200" y="0" width="8" height="8" fill="#b0b0b0"/><rect x="208" y="0" width="8" height="8" fill="#a9a9a9"/><rect x="216" y="0" width="8" height="8" fill="#cfcfcf"/><rect x="224" y="0" width="8" height="8" fill="#797979"/><rect x="232" y="0" width="8" height="8" fill="#acacac"/><rect x="240" y="0" width="8" height="8" fill="#d1d1d1"/><rect x="248" y="0" width="8" height="8" fill="#a4a4a4"/><rect x="256" y="0" width="8" height="8" fill="#7d7d7d"/><rect x="264" y="0" width="8" height="8" fill="#7a7a7a"/><rect x="272" y="0" width="8" height="8" fill="#7f7f7f"/><rect x="280" y="0" width="8" height="8" fill="#b7b7b7"/><rect x="288" y="0" width="8" height="8" fill="#818181"/><rect x="296" y="0" width="8" height="8" fill="#acacac"/><rect x="304" y="0" width="8" height="8" fill="#adadad"/><rect x="312" y="0" width="8" height="8" fill="#b4b4b4"/><rect x="320" y="0" width="8" height="8" fill="#cacaca"/><rect x="328" y="0" width="8" height="8" fill="#d0d0d0"/><rect x="336" y="0" width="8" height="8" fill="#b7b7b7"/><rect x="344" y="0" width="8" height="8" fill="#878787"/><rect x="352" y="0" width="8" height="8" fill="#b6b6b6"/><rect x="0" y="8" width="8" height="8" fill="#b7b7b7"/><rect x="8" y="8" width="8" height="8" fill="#d1d1d1"/><rect x="16" y="8" width="8" height="8" fill="#b7b7b7"/><rect x="24" y="8" width="8" height="8" fill="#b0b0b0"/><rect x="32" y="8" width="8" height="8" fill="#b5b5b5"/><rect x="40" y="8" width="8" height="8" fill="#717171"/><rect x="48" y="8" width="8" height="8" fill="#797979"/><rect x="56" y="8" width="8" height="8" fill="#777777"/><rect x="64" y="8" width="8" height="8" fill="#b1b1b1"/><rect x="72" y="8" width="8" height="8" fill="#7e7e7e"/><rect x="80" y="8" width="8" height="8" fill="#aaaaaa"/><rect x="88" y="8" width="8" height="8" fill="#d5d5d5"/><rect x="96" y="8" width="8" height="8" fill="#d0d0d0"/><rect x="104" y="8" width="8" height="8" fill="#adadad"/><rect x="112" y="8" width="8" height="8" fill="#aeaeae"/><rect x="120" y="8" width="8" height="8" fill="#cccccc"/><rect x="128" y="8" width="8" height="8" fill="#747474"/><rect x="136" y="8" width="8" height="8" fill="#777777"/><rect x="144" y="8" width="8" height="8" fill="#8a8a8a"/><rect x="152" y="8" width="8" height="8" fill="#aaaaaa"/><rect x="160" y="8" width="8" height="8" fill="#a6a6a6"/><rect x="168" y="8" width="8" height="8" fill="#adadad"/><rect x="176" y="8" width="8" height="8" fill="#acacac"/><rect x="184" y="8" width="8" height="8" fill="#d8d8d8"/><rect x="192" y="8" width="8" height="8" fill="#dcdcdc"/><rect x="200" y="8" width="8" height="8" fill="#a3a3a3"/><rect x="208" y="8" width="8" height="8" fill="#bababa"/><rect x="216" y="8" width="8" height="8" fill="#d9d9d9"/><rect x="224" y="8" width="8" height="8" fill="#aeaeae"/><rect x="232" y="8" width="8" height="8" fill="#b1b1b1"/><rect x="240" y="8" width="8" height="8" fill="#a3a3a3"/><rect x="248" y="8" width="8" height="8" fill="#767676"/><rect x="256" y="8" width="8" height="8" fill="#a5a5a5"/><rect x="264" y="8" width="8" height="8" fill="#a3a3a3"/><rect x="272" y="8" width="8" height="8" fill="#828282"/><rect x="280" y="8" width="8" height="8" fill="#737373"/><rect x="288" y="8" width="8" height="8" fill="#dbdbdb"/><rect x="296" y="8" width="8" height="8" fill="#767676"/><rect x="304" y="8" width="8" height="8" fill="#a6a6a6"/><rect x="312" y="8" width="8" height="8" fill="#adadad"/><rect x="320" y="8" width="8" height="8" fill="#b1b1b1"/><rect x="328" y="8" width="8" height="8" fill="#7f7f7f"/><rect x="336" y="8" width="8" height="8" fill="#d6d6d6"/><rect x="344" y="8" width="8" height="8" fill="#ababab"/><rect x="352" y="8" width="8" height="8" fill="#737373"/><rect x="0" y="16" width="8" height="8" fill="#d0d0d0"/><rect x="8" y="16" width="8" height="8" fill="#b8b8b8"/><rect x="16" y="16" width="8" height="8" fill="#707070"/><rect x="24" y="16" width="8" height="8" fill="#808080"/><rect x="32" y="16" width="8" height="8" fill="#b8b8b8"/><rect x="40" y="16" width="8" height="8" fill="#a2a2a2"/><rect x="48" y="16" width="8" height="8" fill="#d1d1d1"/><rect x="56" y="16" width="8" height="8" fill="#cacaca"/><rect x="64" y="16" width="8" height="8" fill="#aaaaaa"/><rect x="72" y="16" width="8" height="8" fill="#a7a7a7"/><rect x="80" y="16" width="8" height="8" fill="#a9a9a9"/><rect x="88" y="16" width="8" height="8" fill="#bababa"/><rect x="96" y="16" width="8" height="8" fill="#b6b6b6"/><rect x="104" y="16" width="8" height="8" fill="#898989"/><rect x="112" y="16" width="8" height="8" fill="#cecece"/><rect x="120" y="16" width="8" height="8" fill="#d4d4d4"/><rect x="128" y="16" width="8" height="8" fill="#cfcfcf"/><rect x="136" y="16" width="8" height="8" fill="#7f7f7f"/><rect x="144" y="16" width="8" height="8" fill="#a2a2a2"/><rect x="152" y="16" width="8" height="8" fill="#d0d0d0"/><rect x="160" y="16" width="8" height="8" fill="#a8a8a8"/><rect x="168" y="16" width="8" height="8" fill="#adadad"/><rect x="176" y="16" width="8" height="8" fill="#b9b9b9"/><rect x="184" y="16" width="8" height="8" fill="#d3d3d3"/><rect x="192" y="16" width="8" height="8" fill="#737373"/><rect x="200" y="16" width="8" height="8" fill="#767676"/><rect x="208" y="16" width="8" height="8" fill="#b1b1b1"/><rect x="216" y="16" width="8" height="8" fill="#b5b5b5"/><rect x="224" y="16" width="8" height="8" fill="#d7d7d7"/><rect x="232" y="16" width="8" height="8" fill="#d3d3d3"/><rect x="240" y="16" width="8" height="8" fill="#cacaca"/><rect x="248" y="16" width="8" height="8" fill="#cbcbcb"/><rect x="256" y="16" width="8" height="8" fill="#cecece"/><rect x="264" y="16" width="8" height="8" fill="#a7a7a7"/><rect x="272" y="16" width="8" height="8" fill="#b6b6b6"/><rect x="280" y="16" width="8" height="8" fill="#b9b9b9"/><rect x="288" y="16" width="8" height="8" fill="#aeaeae"/><rect x="296" y="16" width="8" height="8" fill="#cacaca"/><rect x="304" y="16" width="8" height="8" fill="#cdcdcd"/><rect x="312" y="16" width="8" height="8" fill="#c8c8c8"/><rect x="320" y="16" width="8" height="8" fill="#7e7e7e"/><rect x="328" y="16" width="8" height="8" fill="#cccccc"/><rect x="336" y="16" width="8" height="8" fill="#b5b5b5"/><rect x="344" y="16" width="8" height="8" fill="#d3d3d3"/><rect x="352" y="16" width="8" height="8" fill="#818181"/><rect x="0" y="24" width="8" height="8" fill="#707070"/><rect x="8" y="24" width="8" height="8" fill="#dcdcdc"/><rect x="16" y="24" width="8" height="8" fill="#878787"/><rect x="24" y="24" width="8" height="8" fill="#d5d5d5"/><rect x="32" y="24" width="8" height="8" fill="#cecece"/><rect x="40" y="24" width="8" height="8" fill="#cecece"/><rect x="48" y="24" width="8" height="8" fill="#767676"/><rect x="56" y="24" width="8" height="8" fill="#a9a9a9"/><rect x="64" y="24" width="8" height="8" fill="#d2d2d2"/><rect x="72" y="24" width="8" height="8" fill="#afafaf"/><rect x="80" y="24" width="8" height="8" fill="#c9c9c9"/><rect x="88" y="24" width="8" height="8" fill="#d3d3d3"/><rect x="96" y="24" width="8" height="8" fill="#dadada"/><rect x="104" y="24" width="8" height="8" fill="#d8d8d8"/><rect x="112" y="24" width="8" height="8" fill="#b2b2b2"/><rect x="120" y="24" width="8" height="8" fill="#747474"/><rect x="128" y="24" width="8" height="8" fill="#a2a2a2"/><rect x="136" y="24" width="8" height="8" fill="#cdcdcd"/><rect x="144" y="24" width="8" height="8" fill="#bababa"/><rect x="152" y="24" width="8" height="8" fill="#cdcdcd"/><rect x="160" y="24" width="8" height="8" fill="#838383"/><rect x="168" y="24" width="8" height="8" fill="#d9d9d9"/><rect x="176" y="24" width="8" height="8" fill="#858585"/><rect x="184" y="24" width="8" height="8" fill="#b3b3b3"/><rect x="192" y="24" width="8" height="8" fill="#bababa"/><rect x="200" y="24" width="8" height="8" fill="#818181"/><rect x="208" y="24" width="8" height="8" fill="#767676"/><rect x="216" y="24" width="8" height="8" fill="#bababa"/><rect x="224" y="24" width="8" height="8" fill="#7e7e7e"/><rect x="232" y="24" width="8" height="8" fill="#bababa"/><rect x="240" y="24" width="8" height="8" fill="#cacaca"/><rect x="248" y="24" width="8" height="8" fill="#b5b5b5"/><rect x="256" y="24" width="8" height="8" fill="#dbdbdb"/><rect x="264" y="24" width="8" height="8" fill="#b8b8b8"/><rect x="272" y="24" width="8" height="8" fill="#b2b2b2"/><rect x="280" y="24" width="8" height="8" fill="#b1b1b1"/><rect x="288" y="24" width="8" height="8" fill="#a9a9a9"/><rect x="296" y="24" width="8" height="8" fill="#aaaaaa"/><rect x="304" y="24" width="8" height="8" fill="#cecece"/><rect x="312" y="24" width="8" height="8" fill="#cccccc"/><rect x="320" y="24" width="8" height="8" fill="#aeaeae"/><rect x="328" y="24" width="8" height="8" fill="#a4a4a4"/><rect x="336" y="24" width="8" height="8" fill="#afafaf"/><rect x="344" y="24" width="8" height="8" fill="#858585"/><rect x="352" y="24" width="8" height="8" fill="#a5a5a5"/><rect x="0" y="32" width="8" height="8" fill="#cccccc"/><rect x="8" y="32" width="8" height="8" fill="#dcdcdc"/><rect x="16" y="32" width="8" height="8" fill="#a6a6a6"/><rect x="24" y="32" width="8" height="8" fill="#a6a6a6"/><rect x="32" y="32" width="8" height="8" fill="#cfcfcf"/><rect x="40" y="32" width="8" height="8" fill="#cbcbcb"/><rect x="48" y="32" width="8" height="8" fill="#b1b1b1"/><rect x="56" y="32" width="8" height="8" fill="#858585"/><rect x="64" y="32" width="8" height="8" fill="#cdcdcd"/><rect x="72" y="32" width="8" height="8" fill="#b2b2b2"/><rect x="80" y="32" width="8" height="8" fill="#afafaf"/><rect x="88" y="32" width="8" height="8" fill="#7a7a7a"/><rect x="96" y="32" width="8" height="8" fill="#7b7b7b"/><rect x="104" y="32" width="8" height="8" fill="#818181"/><rect x="112" y="32" width="8" height="8" fill="#b8b8b8"/><rect x="120" y="32" width="8" height="8" fill="#7a7a7a"/><rect x="128" y="32" width="8" height="8" fill="#ababab"/><rect x="136" y="32" width="8" height="8" fill="#a4a4a4"/><rect x="144" y="32" width="8" height="8" fill="#898989"/><rect x="152" y="32" width="8" height="8" fill="#737373"/><rect x="160" y="32" width="8" height="8" fill="#787878"/><rect x="168" y="32" width="8" height="8" fill="#888888"/><rect x="176" y="32" width="8" height="8" fill="#888888"/><rect x="184" y="32" width="8" height="8" fill="#7d7d7d"/><rect x="192" y="32" width="8" height="8" fill="#d0d0d0"/><rect x="200" y="32" width="8" height="8" fill="#b3b3b3"/><rect x="208" y="32" width="8" height="8" fill="#dadada"/><rect x="216" y="32" width="8" height="8" fill="#acacac"/><rect x="224" y="32" width="8" height="8" fill="#717171"/><rect x="232" y="32" width="8" height="8" fill="#cdcdcd"/><rect x="240" y="32" width="8" height="8" fill="#a4a4a4"/><rect x="248" y="32" width="8" height="8" fill="#a2a2a2"/><rect x="256" y="32" width="8" height="8" fill="#aaaaaa"/><rect x="264" y="32" width="8" height="8" fill="#777777"/><rect x="272" y="32" width="8" height="8" fill="#737373"/><rect x="280" y="32" width="8" height="8" fill="#acacac"/><rect x="288" y="32" width="8" height="8" fill="#d5d5d5"/><rect x="296" y="32" width="8" height="8" fill="#d0d0d0"/><rect x="304" y="32" width="8" height="8" fill="#a3a3a3"/><rect x="312" y="32" width="8" height="8" fill="#a9a9a9"/><rect x="320" y="32" width="8" height="8" fill="#cdcdcd"/><rect x="328" y="32" width="8" height="8" fill="#a7a7a7"/><rect x="336" y="32" width="8" height="8" fill="#797979"/><rect x="344" y="32" width="8" height="8" fill="#b2b2b2"/><rect x="352" y="32" width="8" height="8" fill="#d1d1d1"/><rect x="0" y="40" width="8" height="8" fill="#b7b7b7"/><rect x="8" y="40" width="8" height="8" fill="#7b7b7b"/><rect x="16" y="40" width="8" height="8" fill="#d0d0d0"/><rect x="24" y="40" width="8" height="8" fill="#707070"/><rect x="32" y="40" width="8" height="8" fill="#d9d9d9"/><rect x="40" y="40" width="8" height="8" fill="#d8d8d8"/><rect x="48" y="40" width="8" height="8" fill="#b0b0b0"/><rect x="56" y="40" width="8" height="8" fill="#8a8a8a"/><rect x="64" y="40" width="8" height="8" fill="#b7b7b7"/><rect x="72" y="40" width="8" height="8" fill="#aeaeae"/><rect x="80" y="40" width="8" height="8" fill="#d1d1d1"/><rect x="88" y="40" width="8" height="8" fill="#a9a9a9"/><rect x="96" y="40" width="8" height="8" fill="#b8b8b8"/><rect x="104" y="40" width="8" height="8" fill="#cccccc"/><rect x="112" y="40" width="8" height="8" fill="#adadad"/><rect x="120" y="40" width="8" height="8" fill="#cccccc"/><rect x="128" y="40" width="8" height="8" fill="#848484"/><rect x="136" y="40" width="8" height="8" fill="#d0d0d0"/><rect x="144" y="40" width="8" height="8" fill="#a3a3a3"/><rect x="152" y="40" width="8" height="8" fill="#8a8a8a"/><rect x="160" y="40" width="8" height="8" fill="#b2b2b2"/><rect x="168" y="40" width="8" height="8" fill="#ababab"/><rect x="176" y="40" width="8" height="8" fill="#b8b8b8"/><rect x="184" y="40" width="8" height="8" fill="#b0b0b0"/><rect x="192" y="40" width="8" height="8" fill="#787878"/><rect x="200" y="40" width="8" height="8" fill="#aaaaaa"/><rect x="208" y="40" width="8" height="8" fill="#acacac"/><rect x="216" y="40" width="8" height="8" fill="#d9d9d9"/><rect x="224" y="40" width="8" height="8" fill="#a3a3a3"/><rect x="232" y="40" width="8" height="8" fill="#d1d1d1"/><rect x="240" y="40" width="8" height="8" fill="#757575"/><rect x="248" y="40" width="8" height="8" fill="#7c7c7c"/><rect x="256" y="40" width="8" height="8" fill="#787878"/><rect x="264" y="40" width="8" height="8" fill="#a8a8a8"/><rect x="272" y="40" width="8" height="8" fill="#bababa"/><rect x="280" y="40" width="8" height="8" fill="#787878"/><rect x="288" y="40" width="8" height="8" fill="#cccccc"/><rect x="296" y="40" width="8" height="8" fill="#a3a3a3"/><rect x="304" y="40" width="8" height="8" fill="#ababab"/><rect x="312" y="40" width="8" height="8" fill="#a9a9a9"/><rect x="320" y="40" width="8" height="8" fill="#808080"/><rect x="328" y="40" width="8" height="8" fill="#cccccc"/><rect x="336" y="40" width="8" height="8" fill="#b8b8b8"/><rect x="344" y="40" width="8" height="8" fill="#dbdbdb"/><rect x="352" y="40" width="8" height="8" fill="#acacac"/><rect x="0" y="48" width="8" height="8" fill="#e6e6e6"/><rect x="8" y="48" width="8" height="8" fill="#f2f2f2"/><rect x="16" y="48" width="8" height="8" fill="#f2f2f2"/><rect x="24" y="48" width="8" height="8" fill="#e2e2e2"/><rect x="32" y="48" width="8" height="8" fill="#dadada"/><rect x="40" y="48" width="8" height="8" fill="#dcdcdc"/><rect x="48" y="48" width="8" height="8" fill="#707070"/><rect x="56" y="48" width="8" height="8" fill="#848484"/><rect x="64" y="48" width="8" height="8" fill="#a5a5a5"/><rect x="72" y="48" width="8" height="8" fill="#b0b0b0"/><rect x="80" y="48" width="8" height="8" fill="#b6b6b6"/><rect x="88" y="48" width="8" height="8" fill="#818181"/><rect x="96" y="48" width="8" height="8" fill="#b1b1b1"/><rect x="104" y="48" width="8" height="8" fill="#b0b0b0"/><rect x="112" y="48" width="8" height="8" fill="#d8d8d8"/><rect x="120" y="48" width="8" height="8" fill="#cacaca"/><rect x="128" y="48" width="8" height="8" fill="#a4a4a4"/><rect x="136" y="48" width="8" height="8" fill="#d7d7d7"/><rect x="144" y="48" width="8" height="8" fill="#a4a4a4"/><rect x="152" y="48" width="8" height="8" fill="#cfcfcf"/><rect x="160" y="48" width="8" height="8" fill="#cecece"/><rect x="168" y="48" width="8" height="8" fill="#848484"/><rect x="176" y="48" width="8" height="8" fill="#d7d7d7"/><rect x="184" y="48" width="8" height="8" fill="#cacaca"/><rect x="192" y="48" width="8" height="8" fill="#b7b7b7"/><rect x="200" y="48" width="8" height="8" fill="#a3a3a3"/><rect x="208" y="48" width="8" height="8" fill="#b6b6b6"/><rect x="216" y="48" width="8" height="8" fill="#838383"/><rect x="224" y="48" width="8" height="8" fill="#787878"/><rect x="232" y="48" width="8" height="8" fill="#b8b8b8"/><rect x="240" y="48" width="8" height="8" fill="#b4b4b4"/><rect x="248" y="48" width="8" height="8" fill="#7f7f7f"/><rect x="256" y="48" width="8" height="8" fill="#787878"/><rect x="264" y="48" width="8" height="8" fill="#cbcbcb"/><rect x="272" y="48" width="8" height="8" fill="#b7b7b7"/><rect x="280" y="48" width="8" height="8" fill="#b8b8b8"/><rect x="288" y="48" width="8" height="8" fill="#b0b0b0"/><rect x="296" y="48" width="8" height="8" fill="#bababa"/><rect x="304" y="48" width="8" height="8" fill="#818181"/><rect x="312" y="48" width="8" height="8" fill="#727272"/><rect x="320" y="48" width="8" height="8" fill="#c8c8c8"/><rect x="328" y="48" width="8" height="8" fill="#a4a4a4"/><rect x="336" y="48" width="8" height="8" fill="#d6d6d6"/><rect x="344" y="48" width="8" height="8" fill="#d4d4d4"/><rect x="352" y="48" width="8" height="8" fill="#767676"/><rect x="0" y="56" width="8" height="8" fill="#f2f2f2"/><rect x="8" y="56" width="8" height="8" fill="#f2f2f2"/><rect x="16" y="56" width="8" height="8" fill="#e9e9e9"/><rect x="24" y="56" width="8" height="8" fill="#e7e7e7"/><rect x="32" y="56" width="8" height="8" fill="#7f7f7f"/><rect x="40" y="56" width="8" height="8" fill="#aeaeae"/><rect x="48" y="56" width="8" height="8" fill="#a6a6a6"/><rect x="56" y="56" width="8" height="8" fill="#aeaeae"/><rect x="64" y="56" width="8" height="8" fill="#acacac"/><rect x="72" y="56" width="8" height="8" fill="#888888"/><rect x="80" y="56" width="8" height="8" fill="#aeaeae"/><rect x="88" y="56" width="8" height="8" fill="#767676"/><rect x="96" y="56" width="8" height="8" fill="#b9b9b9"/><rect x="104" y="56" width="8" height="8" fill="#adadad"/><rect x="112" y="56" width="8" height="8" fill="#7c7c7c"/><rect x="120" y="56" width="8" height="8" fill="#dadada"/><rect x="128" y="56" width="8" height="8" fill="#7d7d7d"/><rect x="136" y="56" width="8" height="8" fill="#c9c9c9"/><rect x="144" y="56" width="8" height="8" fill="#a3a3a3"/><rect x="152" y="56" width="8" height="8" fill="#d1d1d1"/><rect x="160" y="56" width="8" height="8" fill="#a6a6a6"/><rect x="168" y="56" width="8" height="8" fill="#aaaaaa"/><rect x="176" y="56" width="8" height="8" fill="#acacac"/><rect x="184" y="56" width="8" height="8" fill="#7b7b7b"/><rect x="192" y="56" width="8" height="8" fill="#d5d5d5"/><rect x="200" y="56" width="8" height="8" fill="#dcdcdc"/><rect x="208" y="56" width="8" height="8" fill="#b3b3b3"/><rect x="216" y="56" width="8" height="8" fill="#b9b9b9"/><rect x="224" y="56" width="8" height="8" fill="#878787"/><rect x="232" y="56" width="8" height="8" fill="#b5b5b5"/><rect x="240" y="56" width="8" height="8" fill="#dcdcdc"/><rect x="248" y="56" width="8" height="8" fill="#d7d7d7"/><rect x="256" y="56" width="8" height="8" fill="#818181"/><rect x="264" y="56" width="8" height="8" fill="#7f7f7f"/><rect x="272" y="56" width="8" height="8" fill="#ababab"/><rect x="280" y="56" width="8" height="8" fill="#b9b9b9"/><rect x="288" y="56" width="8" height="8" fill="#dcdcdc"/><rect x="296" y="56" width="8" height="8" fill="#b6b6b6"/><rect x="304" y="56" width="8" height="8" fill="#7f7f7f"/><rect x="312" y="56" width="8" height="8" fill="#aeaeae"/><rect x="320" y="56" width="8" height="8" fill="#848484"/><rect x="328" y="56" width="8" height="8" fill="#767676"/><rect x="336" y="56" width="8" height="8" fill="#b1b1b1"/><rect x="344" y="56" width="8" height="8" fill="#b0b0b0"/><rect x="352" y="56" width="8" height="8" fill="#d6d6d6"/><rect x="0" y="64" width="8" height="8" fill="#e4e4e4"/><rect x="8" y="64" width="8" height="8" fill="#e9e9e9"/><rect x="16" y="64" width="8" height="8" fill="#e2e2e2"/><rect x="24" y="64" width="8" height="8" fill="#f2f2f2"/><rect x="32" y="64" width="8" height="8" fill="#787878"/><rect x="40" y="64" width="8" height="8" fill="#a3a3a3"/><rect x="48" y="64" width="8" height="8" fill="#b4b4b4"/><rect x="56" y="64" width="8" height="8" fill="#cccccc"/><rect x="64" y="64" width="8" height="8" fill="#b2b2b2"/><rect x="72" y="64" width="8" height="8" fill="#a8a8a8"/><rect x="80" y="64" width="8" height="8" fill="#777777"/><rect x="88" y="64" width="8" height="8" fill="#b6b6b6"/><rect x="96" y="64" width="8" height="8" fill="#ababab"/><rect x="104" y="64" width="8" height="8" fill="#c8c8c8"/><rect x="112" y="64" width="8" height="8" fill="#7d7d7d"/><rect x="120" y="64" width="8" height="8" fill="#b1b1b1"/><rect x="128" y="64" width="8" height="8" fill="#d7d7d7"/><rect x="136" y="64" width="8" height="8" fill="#7c7c7c"/><rect x="144" y="64" width="8" height="8" fill="#d8d8d8"/><rect x="152" y="64" width="8" height="8" fill="#d6d6d6"/><rect x="160" y="64" width="8" height="8" fill="#a5a5a5"/><rect x="168" y="64" width="8" height="8" fill="#747474"/><rect x="176" y="64" width="8" height="8" fill="#b7b7b7"/><rect x="184" y="64" width="8" height="8" fill="#8a8a8a"/><rect x="192" y="64" width="8" height="8" fill="#dcdcdc"/><rect x="200" y="64" width="8" height="8" fill="#d6d6d6"/><rect x="208" y="64" width="8" height="8" fill="#888888"/><rect x="216" y="64" width="8" height="8" fill="#898989"/><rect x="224" y="64" width="8" height="8" fill="#828282"/><rect x="232" y="64" width="8" height="8" fill="#dcdcdc"/><rect x="240" y="64" width="8" height="8" fill="#a6a6a6"/><rect x="248" y="64" width="8" height="8" fill="#b2b2b2"/><rect x="256" y="64" width="8" height="8" fill="#b8b8b8"/><rect x="264" y="64" width="8" height="8" fill="#cbcbcb"/><rect x="272" y="64" width="8" height="8" fill="#808080"/><rect x="280" y="64" width="8" height="8" fill="#cecece"/><rect x="288" y="64" width="8" height="8" fill="#a9a9a9"/><rect x="296" y="64" width="8" height="8" fill="#c8c8c8"/><rect x="304" y="64" width="8" height="8" fill="#797979"/><rect x="312" y="64" width="8" height="8" fill="#d0d0d0"/><rect x="320" y="64" width="8" height="8" fill="#dcdcdc"/><rect x="328" y="64" width="8" height="8" fill="#cfcfcf"/><rect x="336" y="64" width="8" height="8" fill="#a9a9a9"/><rect x="344" y="64" width="8" height="8" fill="#a2a2a2"/><rect x="352" y="64" width="8" height="8" fill="#dcdcdc"/><rect x="0" y="72" width="8" height="8" fill="#efefef"/><rect x="8" y="72" width="8" height="8" fill="#ededed"/><rect x="16" y="72" width="8" height="8" fill="#efefef"/><rect x="24" y="72" width="8" height="8" fill="#ebebeb"/><rect x="32" y="72" width="8" height="8" fill="#d8d8d8"/><rect x="40" y="72" width="8" height="8" fill="#7f7f7f"/><rect x="48" y="72" width="8" height="8" fill="#d1d1d1"/><rect x="56" y="72" width="8" height="8" fill="#cecece"/><rect x="64" y="72" width="8" height="8" fill="#777777"/><rect x="72" y="72" width="8" height="8" fill="#ababab"/><rect x="80" y="72" width="8" height="8" fill="#838383"/><rect x="88" y="72" width="8" height="8" fill="#a7a7a7"/><rect x="96" y="72" width="8" height="8" fill="#d7d7d7"/><rect x="104" y="72" width="8" height="8" fill="#b7b7b7"/><rect x="112" y="72" width="8" height="8" fill="#838383"/><rect x="120" y="72" width="8" height="8" fill="#7c7c7c"/><rect x="128" y="72" width="8" height="8" fill="#707070"/><rect x="136" y="72" width="8" height="8" fill="#cccccc"/><rect x="144" y="72" width="8" height="8" fill="#b8b8b8"/><rect x="152" y="72" width="8" height="8" fill="#7c7c7c"/><rect x="160" y="72" width="8" height="8" fill="#b8b8b8"/><rect x="168" y="72" width="8" height="8" fill="#cbcbcb"/><rect x="176" y="72" width="8" height="8" fill="#cdcdcd"/><rect x="184" y="72" width="8" height="8" fill="#a7a7a7"/><rect x="192" y="72" width="8" height="8" fill="#b2b2b2"/><rect x="200" y="72" width="8" height="8" fill="#c9c9c9"/><rect x="208" y="72" width="8" height="8" fill="#b9b9b9"/><rect x="216" y="72" width="8" height="8" fill="#adadad"/><rect x="224" y="72" width="8" height="8" fill="#d6d6d6"/><rect x="232" y="72" width="8" height="8" fill="#707070"/><rect x="240" y="72" width="8" height="8" fill="#727272"/><rect x="248" y="72" width="8" height="8" fill="#a5a5a5"/><rect x="256" y="72" width="8" height="8" fill="#bababa"/><rect x="264" y="72" width="8" height="8" fill="#7b7b7b"/><rect x="272" y="72" width="8" height="8" fill="#d1d1d1"/><rect x="280" y="72" width="8" height="8" fill="#d5d5d5"/><rect x="288" y="72" width="8" height="8" fill="#868686"/><rect x="296" y="72" width="8" height="8" fill="#adadad"/><rect x="304" y="72" width="8" height="8" fill="#b0b0b0"/><rect x="312" y="72" width="8" height="8" fill="#7b7b7b"/><rect x="320" y="72" width="8" height="8" fill="#d7d7d7"/><rect x="328" y="72" width="8" height="8" fill="#7d7d7d"/><rect x="336" y="72" width="8" height="8" fill="#b6b6b6"/><rect x="344" y="72" width="8" height="8" fill="#c9c9c9"/><rect x="352" y="72" width="8" height="8" fill="#b0b0b0"/><rect x="0" y="80" width="8" height="8" fill="#e4e4e4"/><rect x="8" y="80" width="8" height="8" fill="#ececec"/><rect x="16" y="80" width="8" height="8" fill="#ececec"/><rect x="24" y="80" width="8" height="8" fill="#e4e4e4"/><rect x="32" y="80" width="8" height="8" fill="#777777"/><rect x="40" y="80" width="8" height="8" fill="#868686"/><rect x="48" y="80" width="8" height="8" fill="#d4d4d4"/><rect x="56" y="80" width="8" height="8" fill="#d5d5d5"/><rect x="64" y="80" width="8" height="8" fill="#cccccc"/><rect x="72" y="80" width="8" height="8" fill="#cdcdcd"/><rect x="80" y="80" width="8" height="8" fill="#878787"/><rect x="88" y="80" width="8" height="8" fill="#b8b8b8"/><rect x="96" y="80" width="8" height="8" fill="#dbdbdb"/><rect x="104" y="80" width="8" height="8" fill="#7a7a7a"/><rect x="112" y="80" width="8" height="8" fill="#b5b5b5"/><rect x="120" y="80" width="8" height="8" fill="#767676"/><rect x="128" y="80" width="8" height="8" fill="#a7a7a7"/><rect x="136" y="80" width="8" height="8" fill="#a4a4a4"/><rect x="144" y="80" width="8" height="8" fill="#b1b1b1"/><rect x="152" y="80" width="8" height="8" fill="#acacac"/><rect x="160" y="80" width="8" height="8" fill="#7d7d7d"/><rect x="168" y="80" width="8" height="8" fill="#cacaca"/><rect x="176" y="80" width="8" height="8" fill="#a4a4a4"/><rect x="184" y="80" width="8" height="8" fill="#7d7d7d"/><rect x="192" y="80" width="8" height="8" fill="#b8b8b8"/><rect x="200" y="80" width="8" height="8" fill="#cdcdcd"/><rect x="208" y="80" width="8" height="8" fill="#7d7d7d"/><rect x="216" y="80" width="8" height="8" fill="#b7b7b7"/><rect x="224" y="80" width="8" height="8" fill="#818181"/><rect x="232" y="80" width="8" height="8" fill="#cbcbcb"/><rect x="240" y="80" width="8" height="8" fill="#d1d1d1"/><rect x="248" y="80" width="8" height="8" fill="#b4b4b4"/><rect x="256" y="80" width="8" height="8" fill="#aaaaaa"/><rect x="264" y="80" width="8" height="8" fill="#cecece"/><rect x="272" y="80" width="8" height="8" fill="#a7a7a7"/><rect x="280" y="80" width="8" height="8" fill="#a6a6a6"/><rect x="288" y="80" width="8" height="8" fill="#b4b4b4"/><rect x="296" y="80" width="8" height="8" fill="#727272"/><rect x="304" y="80" width="8" height="8" fill="#a9a9a9"/><rect x="312" y="80" width="8" height="8" fill="#a9a9a9"/><rect x="320" y="80" width="8" height="8" fill="#a5a5a5"/><rect x="328" y="80" width="8" height="8" fill="#a3a3a3"/><rect x="336" y="80" width="8" height="8" fill="#7f7f7f"/><rect x="344" y="80" width="8" height="8" fill="#cfcfcf"/><rect x="352" y="80" width="8" height="8" fill="#d3d3d3"/><rect x="0" y="88" width="8" height="8" fill="#797979"/><rect x="8" y="88" width="8" height="8" fill="#717171"/><rect x="16" y="88" width="8" height="8" fill="#8a8a8a"/><rect x="24" y="88" width="8" height="8" fill="#a4a4a4"/><rect x="32" y="88" width="8" height="8" fill="#a7a7a7"/><rect x="40" y="88" width="8" height="8" fill="#aaaaaa"/><rect x="48" y="88" width="8" height="8" fill="#c8c8c8"/><rect x="56" y="88" width="8" height="8" fill="#838383"/><rect x="64" y="88" width="8" height="8" fill="#adadad"/><rect x="72" y="88" width="8" height="8" fill="#7b7b7b"/><rect x="80" y="88" width="8" height="8" fill="#a3a3a3"/><rect x="88" y="88" width="8" height="8" fill="#787878"/><rect x="96" y="88" width="8" height="8" fill="#878787"/><rect x="104" y="88" width="8" height="8" fill="#a8a8a8"/><rect x="112" y="88" width="8" height="8" fill="#d2d2d2"/><rect x="120" y="88" width="8" height="8" fill="#adadad"/><rect x="128" y="88" width="8" height="8" fill="#797979"/><rect x="136" y="88" width="8" height="8" fill="#717171"/><rect x="144" y="88" width="8" height="8" fill="#d9d9d9"/><rect x="152" y="88" width="8" height="8" fill="#afafaf"/><rect x="160" y="88" width="8" height="8" fill="#7c7c7c"/><rect x="168" y="88" width="8" height="8" fill="#a6a6a6"/><rect x="176" y="88" width="8" height="8" fill="#a4a4a4"/><rect x="184" y="88" width="8" height="8" fill="#aeaeae"/><rect x="192" y="88" width="8" height="8" fill="#afafaf"/><rect x="200" y="88" width="8" height="8" fill="#d1d1d1"/><rect x="208" y="88" width="8" height="8" fill="#a3a3a3"/><rect x="216" y="88" width="8" height="8" fill="#b4b4b4"/><rect x="224" y="88" width="8" height="8" fill="#d5d5d5"/><rect x="232" y="88" width="8" height="8" fill="#bababa"/><rect x="240" y="88" width="8" height="8" fill="#d3d3d3"/><rect x="248" y="88" width="8" height="8" fill="#aeaeae"/><rect x="256" y="88" width="8" height="8" fill="#cecece"/><rect x="264" y="88" width="8" height="8" fill="#d5d5d5"/><rect x="272" y="88" width="8" height="8" fill="#d5d5d5"/><rect x="280" y="88" width="8" height="8" fill="#727272"/><rect x="288" y="88" width="8" height="8" fill="#adadad"/><rect x="296" y="88" width="8" height="8" fill="#a7a7a7"/><rect x="304" y="88" width="8" height="8" fill="#717171"/><rect x="312" y="88" width="8" height="8" fill="#b6b6b6"/><rect x="320" y="88" width="8" height="8" fill="#d4d4d4"/><rect x="328" y="88" width="8" height="8" fill="#838383"/><rect x="336" y="88" width="8" height="8" fill="#d8d8d8"/><rect x="344" y="88" width="8" height="8" fill="#7b7b7b"/><rect x="352" y="88" width="8" height="8" fill="#b2b2b2"/><rect x="0" y="96" width="8" height="8" fill="#727272"/><rect x="8" y="96" width="8" height="8" fill="#7f7f7f"/><rect x="16" y="96" width="8" height="8" fill="#cecece"/><rect x="24" y="96" width="8" height="8" fill="#a3a3a3"/><rect x="32" y="96" width="8" height="8" fill="#d7d7d7"/><rect x="40" y="96" width="8" height="8" fill="#b5b5b5"/><rect x="48" y="96" width="8" height="8" fill="#d4d4d4"/><rect x="56" y="96" width="8" height="8" fill="#868686"/><rect x="64" y="96" width="8" height="8" fill="#a7a7a7"/><rect x="72" y="96" width="8" height="8" fill="#a9a9a9"/><rect x="80" y="96" width="8" height="8" fill="#b5b5b5"/><rect x="88" y="96" width="8" height="8" fill="#d7d7d7"/><rect x="96" y="96" width="8" height="8" fill="#767676"/><rect x="104" y="96" width="8" height="8" fill="#808080"/><rect x="112" y="96" width="8" height="8" fill="#7b7b7b"/><rect x="120" y="96" width="8" height="8" fill="#777777"/><rect x="128" y="96" width="8" height="8" fill="#cecece"/><rect x="136" y="96" width="8" height="8" fill="#818181"/><rect x="144" y="96" width="8" height="8" fill="#c9c9c9"/><rect x="152" y="96" width="8" height="8" fill="#acacac"/><rect x="160" y="96" width="8" height="8" fill="#838383"/><rect x="168" y="96" width="8" height="8" fill="#b6b6b6"/><rect x="176" y="96" width="8" height="8" fill="#dcdcdc"/><rect x="184" y="96" width="8" height="8" fill="#b4b4b4"/><rect x="192" y="96" width="8" height="8" fill="#aeaeae"/><rect x="200" y="96" width="8" height="8" fill="#b0b0b0"/><rect x="208" y="96" width="8" height="8" fill="#a7a7a7"/><rect x="216" y="96" width="8" height="8" fill="#838383"/><rect x="224" y="96" width="8" height="8" fill="#d6d6d6"/><rect x="232" y="96" width="8" height="8" fill="#888888"/><rect x="240" y="96" width="8" height="8" fill="#b0b0b0"/><rect x="248" y="96" width="8" height="8" fill="#d7d7d7"/><rect x="256" y="96" width="8" height="8" fill="#a4a4a4"/><rect x="264" y="96" width="8" height="8" fill="#7d7d7d"/><rect x="272" y="96" width="8" height="8" fill="#b0b0b0"/><rect x="280" y="96" width="8" height="8" fill="#b7b7b7"/><rect x="288" y="96" width="8" height="8" fill="#848484"/><rect x="296" y="96" width="8" height="8" fill="#878787"/><rect x="304" y="96" width="8" height="8" fill="#b9b9b9"/><rect x="312" y="96" width="8" height="8" fill="#a3a3a3"/><rect x="320" y="96" width="8" height="8" fill="#d4d4d4"/><rect x="328" y="96" width="8" height="8" fill="#a6a6a6"/><rect x="336" y="96" width="8" height="8" fill="#727272"/><rect x="344" y="96" width="8" height="8" fill="#cbcbcb"/><rect x="352" y="96" width="8" height="8" fill="#7f7f7f"/><rect x="0" y="104" width="8" height="8" fill="#a7a7a7"/><rect x="8" y="104" width="8" height="8" fill="#b9b9b9"/><rect x="16" y="104" width="8" height="8" fill="#cacaca"/><rect x="24" y="104" width="8" height="8" fill="#dbdbdb"/><rect x="32" y="104" width="8" height="8" fill="#cdcdcd"/><rect x="40" y="104" width="8" height="8" fill="#b5b5b5"/><rect x="48" y="104" width="8" height="8" fill="#b0b0b0"/><rect x="56" y="104" width="8" height="8" fill="#808080"/><rect x="64" y="104" width="8" height="8" fill="#d7d7d7"/><rect x="72" y="104" width="8" height="8" fill="#787878"/><rect x="80" y="104" width="8" height="8" fill="#a9a9a9"/><rect x="88" y="104" width="8" height="8" fill="#a3a3a3"/><rect x="96" y="104" width="8" height="8" fill="#7c7c7c"/><rect x="104" y="104" width="8" height="8" fill="#787878"/><rect x="112" y="104" width="8" height="8" fill="#aeaeae"/><rect x="120" y="104" width="8" height="8" fill="#898989"/><rect x="128" y="104" width="8" height="8" fill="#bababa"/><rect x="136" y="104" width="8" height="8" fill="#b6b6b6"/><rect x="144" y="104" width="8" height="8" fill="#d6d6d6"/><rect x="152" y="104" width="8" height="8" fill="#b4b4b4"/><rect x="160" y="104" width="8" height="8" fill="#a5a5a5"/><rect x="168" y="104" width="8" height="8" fill="#b3b3b3"/><rect x="176" y="104" width="8" height="8" fill="#aeaeae"/><rect x="184" y="104" width="8" height="8" fill="#d3d3d3"/><rect x="192" y="104" width="8" height="8" fill="#adadad"/><rect x="200" y="104" width="8" height="8" fill="#adadad"/><rect x="208" y="104" width="8" height="8" fill="#a4a4a4"/><rect x="216" y="104" width="8" height="8" fill="#a7a7a7"/><rect x="224" y="104" width="8" height="8" fill="#a3a3a3"/><rect x="232" y="104" width="8" height="8" fill="#b2b2b2"/><rect x="240" y="104" width="8" height="8" fill="#b6b6b6"/><rect x="248" y="104" width="8" height="8" fill="#dadada"/><rect x="256" y="104" width="8" height="8" fill="#d2d2d2"/><rect x="264" y="104" width="8" height="8" fill="#c9c9c9"/><rect x="272" y="104" width="8" height="8" fill="#797979"/><rect x="280" y="104" width="8" height="8" fill="#afafaf"/><rect x="288" y="104" width="8" height="8" fill="#adadad"/><rect x="296" y="104" width="8" height="8" fill="#cccccc"/><rect x="304" y="104" width="8" height="8" fill="#b5b5b5"/><rect x="312" y="104" width="8" height="8" fill="#a2a2a2"/><rect x="320" y="104" width="8" height="8" fill="#828282"/><rect x="328" y="104" width="8" height="8" fill="#a5a5a5"/><rect x="336" y="104" width="8" height="8" fill="#b3b3b3"/><rect x="344" y="104" width="8" height="8" fill="#828282"/><rect x="352" y="104" width="8" height="8" fill="#a6a6a6"/><rect x="0" y="112" width="8" height="8" fill="#838383"/><rect x="8" y="112" width="8" height="8" fill="#cdcdcd"/><rect x="16" y="112" width="8" height="8" fill="#898989"/><rect x="24" y="112" width="8" height="8" fill="#a6a6a6"/><rect x="32" y="112" width="8" height="8" fill="#a4a4a4"/><rect x="40" y="112" width="8" height="8" fill="#b7b7b7"/><rect x="48" y="112" width="8" height="8" fill="#d4d4d4"/><rect x="56" y="112" width="8" height="8" fill="#c8c8c8"/><rect x="64" y="112" width="8" height="8" fill="#8a8a8a"/><rect x="72" y="112" width="8" height="8" fill="#adadad"/><rect x="80" y="112" width="8" height="8" fill="#b4b4b4"/><rect x="88" y="112" width="8" height="8" fill="#b2b2b2"/><rect x="96" y="112" width="8" height="8" fill="#cfcfcf"/><rect x="104" y="112" width="8" height="8" fill="#707070"/><rect x="112" y="112" width="8" height="8" fill="#818181"/><rect x="120" y="112" width="8" height="8" fill="#757575"/><rect x="128" y="112" width="8" height="8" fill="#717171"/><rect x="136" y="112" width="8" height="8" fill="#cbcbcb"/><rect x="144" y="112" width="8" height="8" fill="#818181"/><rect x="152" y="112" width="8" height="8" fill="#a8a8a8"/><rect x="160" y="112" width="8" height="8" fill="#767676"/><rect x="168" y="112" width="8" height="8" fill="#b6b6b6"/><rect x="176" y="112" width="8" height="8" fill="#b6b6b6"/><rect x="184" y="112" width="8" height="8" fill="#b5b5b5"/><rect x="192" y="112" width="8" height="8" fill="#797979"/><rect x="200" y="112" width="8" height="8" fill="#848484"/><rect x="208" y="112" width="8" height="8" fill="#878787"/><rect x="216" y="112" width="8" height="8" fill="#d9d9d9"/><rect x="224" y="112" width="8" height="8" fill="#7d7d7d"/><rect x="232" y="112" width="8" height="8" fill="#d6d6d6"/><rect x="240" y="112" width="8" height="8" fill="#848484"/><rect x="248" y="112" width="8" height="8" fill="#a9a9a9"/><rect x="256" y="112" width="8" height="8" fill="#d0d0d0"/><rect x="264" y="112" width="8" height="8" fill="#717171"/><rect x="272" y="112" width="8" height="8" fill="#878787"/><rect x="280" y="112" width="8" height="8" fill="#d0d0d0"/><rect x="288" y="112" width="8" height="8" fill="#aaaaaa"/><rect x="296" y="112" width="8" height="8" fill="#b7b7b7"/><rect x="304" y="112" width="8" height="8" fill="#b2b2b2"/><rect x="312" y="112" width="8" height="8" fill="#d1d1d1"/><rect x="320" y="112" width="8" height="8" fill="#a8a8a8"/><rect x="328" y="112" width="8" height="8" fill="#808080"/><rect x="336" y="112" width="8" height="8" fill="#787878"/><rect x="344" y="112" width="8" height="8" fill="#cecece"/><rect x="352" y="112" width="8" height="8" fill="#d2d2d2"/><rect x="0" y="120" width="8" height="8" fill="#7c7c7c"/><rect x="8" y="120" width="8" height="8" fill="#a9a9a9"/><rect x="16" y="120" width="8" height="8" fill="#b6b6b6"/><rect x="24" y="120" width="8" height="8" fill="#d9d9d9"/><rect x="32" y="120" width="8" height="8" fill="#b2b2b2"/><rect x="40" y="120" width="8" height="8" fill="#a2a2a2"/><rect x="48" y="120" width="8" height="8" fill="#b9b9b9"/><rect x="56" y="120" width="8" height="8" fill="#797979"/><rect x="64" y="120" width="8" height="8" fill="#d4d4d4"/><rect x="72" y="120" width="8" height="8" fill="#a4a4a4"/><rect x="80" y="120" width="8" height="8" fill="#a7a7a7"/><rect x="88" y="120" width="8" height="8" fill="#707070"/><rect x="96" y="120" width="8" height="8" fill="#838383"/><rect x="104" y="120" width="8" height="8" fill="#d3d3d3"/><rect x="112" y="120" width="8" height="8" fill="#c8c8c8"/><rect x="120" y="120" width="8" height="8" fill="#747474"/><rect x="128" y="120" width="8" height="8" fill="#b6b6b6"/><rect x="136" y="120" width="8" height="8" fill="#727272"/><rect x="144" y="120" width="8" height="8" fill="#cacaca"/><rect x="152" y="120" width="8" height="8" fill="#d3d3d3"/><rect x="160" y="120" width="8" height="8" fill="#8a8a8a"/><rect x="168" y="120" width="8" height="8" fill="#b7b7b7"/><rect x="176" y="120" width="8" height="8" fill="#888888"/><rect x="184" y="120" width="8" height="8" fill="#e8e8e8"/><rect x="192" y="120" width="8" height="8" fill="#717171"/><rect x="200" y="120" width="8" height="8" fill="#ebebeb"/><rect x="208" y="120" width="8" height="8" fill="#e8e8e8"/><rect x="216" y="120" width="8" height="8" fill="#acacac"/><rect x="224" y="120" width="8" height="8" fill="#a2a2a2"/><rect x="232" y="120" width="8" height="8" fill="#ababab"/><rect x="240" y="120" width="8" height="8" fill="#888888"/><rect x="248" y="120" width="8" height="8" fill="#acacac"/><rect x="256" y="120" width="8" height="8" fill="#dbdbdb"/><rect x="264" y="120" width="8" height="8" fill="#ababab"/><rect x="272" y="120" width="8" height="8" fill="#a2a2a2"/><rect x="280" y="120" width="8" height="8" fill="#c8c8c8"/><rect x="288" y="120" width="8" height="8" fill="#bababa"/><rect x="296" y="120" width="8" height="8" fill="#7f7f7f"/><rect x="304" y="120" width="8" height="8" fill="#b3b3b3"/><rect x="312" y="120" width="8" height="8" fill="#b8b8b8"/><rect x="320" y="120" width="8" height="8" fill="#cacaca"/><rect x="328" y="120" width="8" height="8" fill="#ababab"/><rect x="336" y="120" width="8" height="8" fill="#707070"/><rect x="344" y="120" width="8" height="8" fill="#ababab"/><rect x="352" y="120" width="8" height="8" fill="#c9c9c9"/><rect x="0" y="128" width="8" height="8" fill="#7f7f7f"/><rect x="8" y="128" width="8" height="8" fill="#868686"/><rect x="16" y="128" width="8" height="8" fill="#cdcdcd"/><rect x="24" y="128" width="8" height="8" fill="#dadada"/><rect x="32" y="128" width="8" height="8" fill="#b2b2b2"/><rect x="40" y="128" width="8" height="8" fill="#a7a7a7"/><rect x="48" y="128" width="8" height="8" fill="#a8a8a8"/><rect x="56" y="128" width="8" height="8" fill="#cfcfcf"/><rect x="64" y="128" width="8" height="8" fill="#a5a5a5"/><rect x="72" y="128" width="8" height="8" fill="#cacaca"/><rect x="80" y="128" width="8" height="8" fill="#b8b8b8"/><rect x="88" y="128" width="8" height="8" fill="#a5a5a5"/><rect x="96" y="128" width="8" height="8" fill="#adadad"/><rect x="104" y="128" width="8" height="8" fill="#7c7c7c"/><rect x="112" y="128" width="8" height="8" fill="#cacaca"/><rect x="120" y="128" width="8" height="8" fill="#b6b6b6"/><rect x="128" y="128" width="8" height="8" fill="#767676"/><rect x="136" y="128" width="8" height="8" fill="#afafaf"/><rect x="144" y="128" width="8" height="8" fill="#d8d8d8"/><rect x="152" y="128" width="8" height="8" fill="#848484"/><rect x="160" y="128" width="8" height="8" fill="#7e7e7e"/><rect x="168" y="128" width="8" height="8" fill="#838383"/><rect x="176" y="128" width="8" height="8" fill="#ededed"/><rect x="184" y="128" width="8" height="8" fill="#f0f0f0"/><rect x="192" y="128" width="8" height="8" fill="#f0f0f0"/><rect x="200" y="128" width="8" height="8" fill="#e9e9e9"/><rect x="208" y="128" width="8" height="8" fill="#e9e9e9"/><rect x="216" y="128" width="8" height="8" fill="#aaaaaa"/><rect x="224" y="128" width="8" height="8" fill="#b8b8b8"/><rect x="232" y="128" width="8" height="8" fill="#dbdbdb"/><rect x="240" y="128" width="8" height="8" fill="#747474"/><rect x="248" y="128" width="8" height="8" fill="#d2d2d2"/><rect x="256" y="128" width="8" height="8" fill="#adadad"/><rect x="264" y="128" width="8" height="8" fill="#7a7a7a"/><rect x="272" y="128" width="8" height="8" fill="#d0d0d0"/><rect x="280" y="128" width="8" height="8" fill="#cbcbcb"/><rect x="288" y="128" width="8" height="8" fill="#858585"/><rect x="296" y="128" width="8" height="8" fill="#7c7c7c"/><rect x="304" y="128" width="8" height="8" fill="#747474"/><rect x="312" y="128" width="8" height="8" fill="#d1d1d1"/><rect x="320" y="128" width="8" height="8" fill="#a8a8a8"/><rect x="328" y="128" width="8" height="8" fill="#737373"/><rect x="336" y="128" width="8" height="8" fill="#aeaeae"/><rect x="344" y="128" width="8" height="8" fill="#a2a2a2"/><rect x="352" y="128" width="8" height="8" fill="#afafaf"/><rect x="0" y="136" width="8" height="8" fill="#b2b2b2"/><rect x="8" y="136" width="8" height="8" fill="#d1d1d1"/><rect x="16" y="136" width="8" height="8" fill="#a6a6a6"/><rect x="24" y="136" width="8" height="8" fill="#b9b9b9"/><rect x="32" y="136" width="8" height="8" fill="#b9b9b9"/><rect x="40" y="136" width="8" height="8" fill="#afafaf"/><rect x="48" y="136" width="8" height="8" fill="#b4b4b4"/><rect x="56" y="136" width="8" height="8" fill="#d5d5d5"/><rect x="64" y="136" width="8" height="8" fill="#dcdcdc"/><rect x="72" y="136" width="8" height="8" fill="#dcdcdc"/><rect x="80" y="136" width="8" height="8" fill="#a9a9a9"/><rect x="88" y="136" width="8" height="8" fill="#b6b6b6"/><rect x="96" y="136" width="8" height="8" fill="#7d7d7d"/><rect x="104" y="136" width="8" height="8" fill="#b6b6b6"/><rect x="112" y="136" width="8" height="8" fill="#afafaf"/><rect x="120" y="136" width="8" height="8" fill="#aeaeae"/><rect x="128" y="136" width="8" height="8" fill="#b6b6b6"/><rect x="136" y="136" width="8" height="8" fill="#7d7d7d"/><rect x="144" y="136" width="8" height="8" fill="#a2a2a2"/><rect x="152" y="136" width="8" height="8" fill="#afafaf"/><rect x="160" y="136" width="8" height="8" fill="#b7b7b7"/><rect x="168" y="136" width="8" height="8" fill="#cdcdcd"/><rect x="176" y="136" width="8" height="8" fill="#eeeeee"/><rect x="184" y="136" width="8" height="8" fill="#e8e8e8"/><rect x="192" y="136" width="8" height="8" fill="#898989"/><rect x="200" y="136" width="8" height="8" fill="#f0f0f0"/><rect x="208" y="136" width="8" height="8" fill="#e2e2e2"/><rect x="216" y="136" width="8" height="8" fill="#adadad"/><rect x="224" y="136" width="8" height="8" fill="#afafaf"/><rect x="232" y="136" width="8" height="8" fill="#d6d6d6"/><rect x="240" y="136" width="8" height="8" fill="#858585"/><rect x="248" y="136" width="8" height="8" fill="#808080"/><rect x="256" y="136" width="8" height="8" fill="#cbcbcb"/><rect x="264" y="136" width="8" height="8" fill="#dbdbdb"/><rect x="272" y="136" width="8" height="8" fill="#a3a3a3"/><rect x="280" y="136" width="8" height="8" fill="#aeaeae"/><rect x="288" y="136" width="8" height="8" fill="#a2a2a2"/><rect x="296" y="136" width="8" height="8" fill="#7d7d7d"/><rect x="304" y="136" width="8" height="8" fill="#b7b7b7"/><rect x="312" y="136" width="8" height="8" fill="#aaaaaa"/><rect x="320" y="136" width="8" height="8" fill="#797979"/><rect x="328" y="136" width="8" height="8" fill="#d8d8d8"/><rect x="336" y="136" width="8" height="8" fill="#d4d4d4"/><rect x="344" y="136" width="8" height="8" fill="#a7a7a7"/><rect x="352" y="136" width="8" height="8" fill="#888888"/><rect x="0" y="144" width="8" height="8" fill="#898989"/><rect x="8" y="144" width="8" height="8" fill="#b1b1b1"/><rect x="16" y="144" width="8" height="8" fill="#b9b9b9"/><rect x="24" y="144" width="8" height="8" fill="#747474"/><rect x="32" y="144" width="8" height="8" fill="#b6b6b6"/><rect x="40" y="144" width="8" height="8" fill="#d5d5d5"/><rect x="48" y="144" width="8" height="8" fill="#ababab"/><rect x="56" y="144" width="8" height="8" fill="#dcdcdc"/><rect x="64" y="144" width="8" height="8" fill="#8a8a8a"/><rect x="72" y="144" width="8" height="8" fill="#a9a9a9"/><rect x="80" y="144" width="8" height="8" fill="#aeaeae"/><rect x="88" y="144" width="8" height="8" fill="#afafaf"/><rect x="96" y="144" width="8" height="8" fill="#b1b1b1"/><rect x="104" y="144" width="8" height="8" fill="#878787"/><rect x="112" y="144" width="8" height="8" fill="#d3d3d3"/><rect x="120" y="144" width="8" height="8" fill="#ababab"/><rect x="128" y="144" width="8" height="8" fill="#b1b1b1"/><rect x="136" y="144" width="8" height="8" fill="#b6b6b6"/><rect x="144" y="144" width="8" height="8" fill="#7b7b7b"/><rect x="152" y="144" width="8" height="8" fill="#797979"/><rect x="160" y="144" width="8" height="8" fill="#c9c9c9"/><rect x="168" y="144" width="8" height="8" fill="#828282"/><rect x="176" y="144" width="8" height="8" fill="#ededed"/><rect x="184" y="144" width="8" height="8" fill="#e8e8e8"/><rect x="192" y="144" width="8" height="8" fill="#e5e5e5"/><rect x="200" y="144" width="8" height="8" fill="#f0f0f0"/><rect x="208" y="144" width="8" height="8" fill="#eeeeee"/><rect x="216" y="144" width="8" height="8" fill="#cdcdcd"/><rect x="224" y="144" width="8" height="8" fill="#b8b8b8"/><rect x="232" y="144" width="8" height="8" fill="#a4a4a4"/><rect x="240" y="144" width="8" height="8" fill="#b3b3b3"/><rect x="248" y="144" width="8" height="8" fill="#d1d1d1"/><rect x="256" y="144" width="8" height="8" fill="#868686"/><rect x="264" y="144" width="8" height="8" fill="#727272"/><rect x="272" y="144" width="8" height="8" fill="#d6d6d6"/><rect x="280" y="144" width="8" height="8" fill="#a5a5a5"/><rect x="288" y="144" width="8" height="8" fill="#aaaaaa"/><rect x="296" y="144" width="8" height="8" fill="#a6a6a6"/><rect x="304" y="144" width="8" height="8" fill="#b3b3b3"/><rect x="312" y="144" width="8" height="8" fill="#7e7e7e"/><rect x="320" y="144" width="8" height="8" fill="#d7d7d7"/><rect x="328" y="144" width="8" height="8" fill="#a7a7a7"/><rect x="336" y="144" width="8" height="8" fill="#b9b9b9"/><rect x="344" y="144" width="8" height="8" fill="#8a8a8a"/><rect x="352" y="144" width="8" height="8" fill="#b8b8b8"/><rect x="0" y="152" width="8" height="8" fill="#b7b7b7"/><rect x="8" y="152" width="8" height="8" fill="#b0b0b0"/><rect x="16" y="152" width="8" height="8" fill="#afafaf"/><rect x="24" y="152" width="8" height="8" fill="#cacaca"/><rect x="32" y="152" width="8" height="8" fill="#7b7b7b"/><rect x="40" y="152" width="8" height="8" fill="#a2a2a2"/><rect x="48" y="152" width="8" height="8" fill="#717171"/><rect x="56" y="152" width="8" height="8" fill="#acacac"/><rect x="64" y="152" width="8" height="8" fill="#cbcbcb"/><rect x="72" y="152" width="8" height="8" fill="#b1b1b1"/><rect x="80" y="152" width="8" height="8" fill="#cccccc"/><rect x="88" y="152" width="8" height="8" fill="#868686"/><rect x="96" y="152" width="8" height="8" fill="#a6a6a6"/><rect x="104" y="152" width="8" height="8" fill="#b7b7b7"/><rect x="112" y="152" width="8" height="8" fill="#b1b1b1"/><rect x="120" y="152" width="8" height="8" fill="#d9d9d9"/><rect x="128" y="152" width="8" height="8" fill="#cecece"/><rect x="136" y="152" width="8" height="8" fill="#acacac"/><rect x="144" y="152" width="8" height="8" fill="#b3b3b3"/><rect x="152" y="152" width="8" height="8" fill="#797979"/><rect x="160" y="152" width="8" height="8" fill="#b1b1b1"/><rect x="168" y="152" width="8" height="8" fill="#b2b2b2"/><rect x="176" y="152" width="8" height="8" fill="#e8e8e8"/><rect x="184" y="152" width="8" height="8" fill="#ececec"/><rect x="192" y="152" width="8" height="8" fill="#e4e4e4"/><rect x="200" y="152" width="8" height="8" fill="#eeeeee"/><rect x="208" y="152" width="8" height="8" fill="#e5e5e5"/><rect x="216" y="152" width="8" height="8" fill="#767676"/><rect x="224" y="152" width="8" height="8" fill="#d7d7d7"/><rect x="232" y="152" width="8" height="8" fill="#b7b7b7"/><rect x="240" y="152" width="8" height="8" fill="#808080"/><rect x="248" y="152" width="8" height="8" fill="#dbdbdb"/><rect x="256" y="152" width="8" height="8" fill="#a6a6a6"/><rect x="264" y="152" width="8" height="8" fill="#b8b8b8"/><rect x="272" y="152" width="8" height="8" fill="#b7b7b7"/><rect x="280" y="152" width="8" height="8" fill="#717171"/><rect x="288" y="152" width="8" height="8" fill="#b0b0b0"/><rect x="296" y="152" width="8" height="8" fill="#a7a7a7"/><rect x="304" y="152" width="8" height="8" fill="#757575"/><rect x="312" y="152" width="8" height="8" fill="#d5d5d5"/><rect x="320" y="152" width="8" height="8" fill="#dcdcdc"/><rect x="328" y="152" width="8" height="8" fill="#8a8a8a"/><rect x="336" y="152" width="8" height="8" fill="#797979"/><rect x="344" y="152" width="8" height="8" fill="#aaaaaa"/><rect x="352" y="152" width="8" height="8" fill="#cdcdcd"/><rect x="0" y="160" width="8" height="8" fill="#acacac"/><rect x="8" y="160" width="8" height="8" fill="#828282"/><rect x="16" y="160" width="8" height="8" fill="#a3a3a3"/><rect x="24" y="160" width="8" height="8" fill="#b2b2b2"/><rect x="32" y="160" width="8" height="8" fill="#737373"/><rect x="40" y="160" width="8" height="8" fill="#d5d5d5"/><rect x="48" y="160" width="8" height="8" fill="#aeaeae"/><rect x="56" y="160" width="8" height="8" fill="#a2a2a2"/><rect x="64" y="160" width="8" height="8" fill="#b5b5b5"/><rect x="72" y="160" width="8" height="8" fill="#b7b7b7"/><rect x="80" y="160" width="8" height="8" fill="#d7d7d7"/><rect x="88" y="160" width="8" height="8" fill="#d9d9d9"/><rect x="96" y="160" width="8" height="8" fill="#848484"/><rect x="104" y="160" width="8" height="8" fill="#a6a6a6"/><rect x="112" y="160" width="8" height="8" fill="#e5e5e5"/><rect x="120" y="160" width="8" height="8" fill="#e5e5e5"/><rect x="128" y="160" width="8" height="8" fill="#e9e9e9"/><rect x="136" y="160" width="8" height="8" fill="#e3e3e3"/><rect x="144" y="160" width="8" height="8" fill="#b9b9b9"/><rect x="152" y="160" width="8" height="8" fill="#a6a6a6"/><rect x="160" y="160" width="8" height="8" fill="#cacaca"/><rect x="168" y="160" width="8" height="8" fill="#b3b3b3"/><rect x="176" y="160" width="8" height="8" fill="#eaeaea"/><rect x="184" y="160" width="8" height="8" fill="#e2e2e2"/><rect x="192" y="160" width="8" height="8" fill="#e4e4e4"/><rect x="200" y="160" width="8" height="8" fill="#e7e7e7"/><rect x="208" y="160" width="8" height="8" fill="#ececec"/><rect x="216" y="160" width="8" height="8" fill="#b4b4b4"/><rect x="224" y="160" width="8" height="8" fill="#d7d7d7"/><rect x="232" y="160" width="8" height="8" fill="#a6a6a6"/><rect x="240" y="160" width="8" height="8" fill="#cbcbcb"/><rect x="248" y="160" width="8" height="8" fill="#b6b6b6"/><rect x="256" y="160" width="8" height="8" fill="#898989"/><rect x="264" y="160" width="8" height="8" fill="#aeaeae"/><rect x="272" y="160" width="8" height="8" fill="#d6d6d6"/><rect x="280" y="160" width="8" height="8" fill="#dadada"/><rect x="288" y="160" width="8" height="8" fill="#aaaaaa"/><rect x="296" y="160" width="8" height="8" fill="#848484"/><rect x="304" y="160" width="8" height="8" fill="#b5b5b5"/><rect x="312" y="160" width="8" height="8" fill="#b5b5b5"/><rect x="320" y="160" width="8" height="8" fill="#c8c8c8"/><rect x="328" y="160" width="8" height="8" fill="#dbdbdb"/><rect x="336" y="160" width="8" height="8" fill="#dadada"/><rect x="344" y="160" width="8" height="8" fill="#a9a9a9"/><rect x="352" y="160" width="8" height="8" fill="#b7b7b7"/><rect x="0" y="168" width="8" height="8" fill="#bababa"/><rect x="8" y="168" width="8" height="8" fill="#d6d6d6"/><rect x="16" y="168" width="8" height="8" fill="#a2a2a2"/><rect x="24" y="168" width="8" height="8" fill="#aaaaaa"/><rect x="32" y="168" width="8" height="8" fill="#b4b4b4"/><rect x="40" y="168" width="8" height="8" fill="#c9c9c9"/><rect x="48" y="168" width="8" height="8" fill="#a6a6a6"/><rect x="56" y="168" width="8" height="8" fill="#dadada"/><rect x="64" y="168" width="8" height="8" fill="#898989"/><rect x="72" y="168" width="8" height="8" fill="#d7d7d7"/><rect x="80" y="168" width="8" height="8" fill="#a4a4a4"/><rect x="88" y="168" width="8" height="8" fill="#b1b1b1"/><rect x="96" y="168" width="8" height="8" fill="#cecece"/><rect x="104" y="168" width="8" height="8" fill="#cfcfcf"/><rect x="112" y="168" width="8" height="8" fill="#f0f0f0"/><rect x="120" y="168" width="8" height="8" fill="#e2e2e2"/><rect x="128" y="168" width="8" height="8" fill="#ededed"/><rect x="136" y="168" width="8" height="8" fill="#f2f2f2"/><rect x="144" y="168" width="8" height="8" fill="#d8d8d8"/><rect x="152" y="168" width="8" height="8" fill="#b2b2b2"/><rect x="160" y="168" width="8" height="8" fill="#a8a8a8"/><rect x="168" y="168" width="8" height="8" fill="#727272"/><rect x="176" y="168" width="8" height="8" fill="#ededed"/><rect x="184" y="168" width="8" height="8" fill="#b2b2b2"/><rect x="192" y="168" width="8" height="8" fill="#e5e5e5"/><rect x="200" y="168" width="8" height="8" fill="#e6e6e6"/><rect x="208" y="168" width="8" height="8" fill="#f2f2f2"/><rect x="216" y="168" width="8" height="8" fill="#a5a5a5"/><rect x="224" y="168" width="8" height="8" fill="#828282"/><rect x="232" y="168" width="8" height="8" fill="#b4b4b4"/><rect x="240" y="168" width="8" height="8" fill="#888888"/><rect x="248" y="168" width="8" height="8" fill="#a5a5a5"/><rect x="256" y="168" width="8" height="8" fill="#dadada"/><rect x="264" y="168" width="8" height="8" fill="#cccccc"/><rect x="272" y="168" width="8" height="8" fill="#a3a3a3"/><rect x="280" y="168" width="8" height="8" fill="#a7a7a7"/><rect x="288" y="168" width="8" height="8" fill="#a2a2a2"/><rect x="296" y="168" width="8" height="8" fill="#818181"/><rect x="304" y="168" width="8" height="8" fill="#b8b8b8"/><rect x="312" y="168" width="8" height="8" fill="#a4a4a4"/><rect x="320" y="168" width="8" height="8" fill="#dcdcdc"/><rect x="328" y="168" width="8" height="8" fill="#a5a5a5"/><rect x="336" y="168" width="8" height="8" fill="#a4a4a4"/><rect x="344" y="168" width="8" height="8" fill="#b4b4b4"/><rect x="352" y="168" width="8" height="8" fill="#727272"/><rect x="0" y="176" width="8" height="8" fill="#d8d8d8"/><rect x="8" y="176" width="8" height="8" fill="#b0b0b0"/><rect x="16" y="176" width="8" height="8" fill="#d3d3d3"/><rect x="24" y="176" width="8" height="8" fill="#cfcfcf"/><rect x="32" y="176" width="8" height="8" fill="#787878"/><rect x="40" y="176" width="8" height="8" fill="#c9c9c9"/><rect x="48" y="176" width="8" height="8" fill="#c8c8c8"/><rect x="56" y="176" width="8" height="8" fill="#c9c9c9"/><rect x="64" y="176" width="8" height="8" fill="#b2b2b2"/><rect x="72" y="176" width="8" height="8" fill="#b6b6b6"/><rect x="80" y="176" width="8" height="8" fill="#d7d7d7"/><rect x="88" y="176" width="8" height="8" fill="#747474"/><rect x="96" y="176" width="8" height="8" fill="#a2a2a2"/><rect x="104" y="176" width="8" height="8" fill="#d1d1d1"/><rect x="112" y="176" width="8" height="8" fill="#e5e5e5"/><rect x="120" y="176" width="8" height="8" fill="#e5e5e5"/><rect x="128" y="176" width="8" height="8" fill="#e9e9e9"/><rect x="136" y="176" width="8" height="8" fill="#e8e8e8"/><rect x="144" y="176" width="8" height="8" fill="#cdcdcd"/><rect x="152" y="176" width="8" height="8" fill="#cfcfcf"/><rect x="160" y="176" width="8" height="8" fill="#838383"/><rect x="168" y="176" width="8" height="8" fill="#cccccc"/><rect x="176" y="176" width="8" height="8" fill="#cbcbcb"/><rect x="184" y="176" width="8" height="8" fill="#f0f0f0"/><rect x="192" y="176" width="8" height="8" fill="#f1f1f1"/><rect x="200" y="176" width="8" height="8" fill="#e9e9e9"/><rect x="208" y="176" width="8" height="8" fill="#e6e6e6"/><rect x="216" y="176" width="8" height="8" fill="#a6a6a6"/><rect x="224" y="176" width="8" height="8" fill="#afafaf"/><rect x="232" y="176" width="8" height="8" fill="#a2a2a2"/><rect x="240" y="176" width="8" height="8" fill="#ababab"/><rect x="248" y="176" width="8" height="8" fill="#a7a7a7"/><rect x="256" y="176" width="8" height="8" fill="#a5a5a5"/><rect x="264" y="176" width="8" height="8" fill="#b1b1b1"/><rect x="272" y="176" width="8" height="8" fill="#808080"/><rect x="280" y="176" width="8" height="8" fill="#898989"/><rect x="288" y="176" width="8" height="8" fill="#a8a8a8"/><rect x="296" y="176" width="8" height="8" fill="#ababab"/><rect x="304" y="176" width="8" height="8" fill="#888888"/><rect x="312" y="176" width="8" height="8" fill="#7b7b7b"/><rect x="320" y="176" width="8" height="8" fill="#aaaaaa"/><rect x="328" y="176" width="8" height="8" fill="#cfcfcf"/><rect x="336" y="176" width="8" height="8" fill="#797979"/><rect x="344" y="176" width="8" height="8" fill="#a7a7a7"/><rect x="352" y="176" width="8" height="8" fill="#878787"/><rect x="0" y="184" width="8" height="8" fill="#cccccc"/><rect x="8" y="184" width="8" height="8" fill="#c8c8c8"/><rect x="16" y="184" width="8" height="8" fill="#b2b2b2"/><rect x="24" y="184" width="8" height="8" fill="#a6a6a6"/><rect x="32" y="184" width="8" height="8" fill="#b2b2b2"/><rect x="40" y="184" width="8" height="8" fill="#adadad"/><rect x="48" y="184" width="8" height="8" fill="#afafaf"/><rect x="56" y="184" width="8" height="8" fill="#828282"/><rect x="64" y="184" width="8" height="8" fill="#8a8a8a"/><rect x="72" y="184" width="8" height="8" fill="#888888"/><rect x="80" y="184" width="8" height="8" fill="#757575"/><rect x="88" y="184" width="8" height="8" fill="#727272"/><rect x="96" y="184" width="8" height="8" fill="#dbdbdb"/><rect x="104" y="184" width="8" height="8" fill="#d0d0d0"/><rect x="112" y="184" width="8" height="8" fill="#e8e8e8"/><rect x="120" y="184" width="8" height="8" fill="#f2f2f2"/><rect x="128" y="184" width="8" height="8" fill="#b9b9b9"/><rect x="136" y="184" width="8" height="8" fill="#f1f1f1"/><rect x="144" y="184" width="8" height="8" fill="#7d7d7d"/><rect x="152" y="184" width="8" height="8" fill="#d7d7d7"/><rect x="160" y="184" width="8" height="8" fill="#858585"/><rect x="168" y="184" width="8" height="8" fill="#a7a7a7"/><rect x="176" y="184" width="8" height="8" fill="#ededed"/><rect x="184" y="184" width="8" height="8" fill="#f0f0f0"/><rect x="192" y="184" width="8" height="8" fill="#e9e9e9"/><rect x="200" y="184" width="8" height="8" fill="#eeeeee"/><rect x="208" y="184" width="8" height="8" fill="#e5e5e5"/><rect x="216" y="184" width="8" height="8" fill="#d7d7d7"/><rect x="224" y="184" width="8" height="8" fill="#a2a2a2"/><rect x="232" y="184" width="8" height="8" fill="#b3b3b3"/><rect x="240" y="184" width="8" height="8" fill="#777777"/><rect x="248" y="184" width="8" height="8" fill="#cfcfcf"/><rect x="256" y="184" width="8" height="8" fill="#a7a7a7"/><rect x="264" y="184" width="8" height="8" fill="#787878"/><rect x="272" y="184" width="8" height="8" fill="#a2a2a2"/><rect x="280" y="184" width="8" height="8" fill="#868686"/><rect x="288" y="184" width="8" height="8" fill="#d0d0d0"/><rect x="296" y="184" width="8" height="8" fill="#838383"/><rect x="304" y="184" width="8" height="8" fill="#b0b0b0"/><rect x="312" y="184" width="8" height="8" fill="#b8b8b8"/><rect x="320" y="184" width="8" height="8" fill="#adadad"/><rect x="328" y="184" width="8" height="8" fill="#cdcdcd"/><rect x="336" y="184" width="8" height="8" fill="#737373"/><rect x="344" y="184" width="8" height="8" fill="#b4b4b4"/><rect x="352" y="184" width="8" height="8" fill="#aaaaaa"/><rect x="0" y="192" width="8" height="8" fill="#737373"/><rect x="8" y="192" width="8" height="8" fill="#a6a6a6"/><rect x="16" y="192" width="8" height="8" fill="#a9a9a9"/><rect x="24" y="192" width="8" height="8" fill="#cccccc"/><rect x="32" y="192" width="8" height="8" fill="#b0b0b0"/><rect x="40" y="192" width="8" height="8" fill="#cdcdcd"/><rect x="48" y="192" width="8" height="8" fill="#c8c8c8"/><rect x="56" y="192" width="8" height="8" fill="#d4d4d4"/><rect x="64" y="192" width="8" height="8" fill="#b5b5b5"/><rect x="72" y="192" width="8" height="8" fill="#d8d8d8"/><rect x="80" y="192" width="8" height="8" fill="#717171"/><rect x="88" y="192" width="8" height="8" fill="#d2d2d2"/><rect x="96" y="192" width="8" height="8" fill="#acacac"/><rect x="104" y="192" width="8" height="8" fill="#b4b4b4"/><rect x="112" y="192" width="8" height="8" fill="#e3e3e3"/><rect x="120" y="192" width="8" height="8" fill="#a6a6a6"/><rect x="128" y="192" width="8" height="8" fill="#cfcfcf"/><rect x="136" y="192" width="8" height="8" fill="#f2f2f2"/><rect x="144" y="192" width="8" height="8" fill="#7a7a7a"/><rect x="152" y="192" width="8" height="8" fill="#b2b2b2"/><rect x="160" y="192" width="8" height="8" fill="#a9a9a9"/><rect x="168" y="192" width="8" height="8" fill="#7c7c7c"/><rect x="176" y="192" width="8" height="8" fill="#d6d6d6"/><rect x="184" y="192" width="8" height="8" fill="#a3a3a3"/><rect x="192" y="192" width="8" height="8" fill="#848484"/><rect x="200" y="192" width="8" height="8" fill="#b7b7b7"/><rect x="208" y="192" width="8" height="8" fill="#b6b6b6"/><rect x="216" y="192" width="8" height="8" fill="#a3a3a3"/><rect x="224" y="192" width="8" height="8" fill="#aaaaaa"/><rect x="232" y="192" width="8" height="8" fill="#707070"/><rect x="240" y="192" width="8" height="8" fill="#a3a3a3"/><rect x="248" y="192" width="8" height="8" fill="#ababab"/><rect x="256" y="192" width="8" height="8" fill="#a7a7a7"/><rect x="264" y="192" width="8" height="8" fill="#838383"/><rect x="272" y="192" width="8" height="8" fill="#d8d8d8"/><rect x="280" y="192" width="8" height="8" fill="#cacaca"/><rect x="288" y="192" width="8" height="8" fill="#b3b3b3"/><rect x="296" y="192" width="8" height="8" fill="#d6d6d6"/><rect x="304" y="192" width="8" height="8" fill="#747474"/><rect x="312" y="192" width="8" height="8" fill="#d5d5d5"/><rect x="320" y="192" width="8" height="8" fill="#aaaaaa"/><rect x="328" y="192" width="8" height="8" fill="#a4a4a4"/><rect x="336" y="192" width="8" height="8" fill="#d1d1d1"/><rect x="344" y="192" width="8" height="8" fill="#dbdbdb"/><rect x="352" y="192" width="8" height="8" fill="#a9a9a9"/><rect x="0" y="200" width="8" height="3" fill="#a8a8a8"/><rect x="8" y="200" width="8" height="3" fill="#adadad"/><rect x="16" y="200" width="8" height="3" fill="#b3b3b3"/><rect x="24" y="200" width="8" height="3" fill="#b1b1b1"/><rect x="32" y="200" width="8" height="3" fill="#ababab"/><rect x="40" y="200" width="8" height="3" fill="#7a7a7a"/><rect x="48" y="200" width="8" height="3" fill="#808080"/><rect x="56" y="200" width="8" height="3" fill="#b4b4b4"/><rect x="64" y="200" width="8" height="3" fill="#adadad"/><rect x="72" y="200" width="8" height="3" fill="#777777"/><rect x="80" y="200" width="8" height="3" fill="#acacac"/><rect x="88" y="200" width="8" height="3" fill="#ababab"/><rect x="96" y="200" width="8" height="3" fill="#cecece"/><rect x="104" y="200" width="8" height="3" fill="#bababa"/><rect x="112" y="200" width="8" height="3" fill="#818181"/><rect x="120" y="200" width="8" height="3" fill="#7b7b7b"/><rect x="128" y="200" width="8" height="3" fill="#a3a3a3"/><rect x="136" y="200" width="8" height="3" fill="#b0b0b0"/><rect x="144" y="200" width="8" height="3" fill="#bababa"/><rect x="152" y="200" width="8" height="3" fill="#777777"/><rect x="160" y="200" width="8" height="3" fill="#cccccc"/><rect x="168" y="200" width="8" height="3" fill="#b7b7b7"/><rect x="176" y="200" width="8" height="3" fill="#b7b7b7"/><rect x="184" y="200" width="8" height="3" fill="#838383"/><rect x="192" y="200" width="8" height="3" fill="#d8d8d8"/><rect x="200" y="200" width="8" height="3" fill="#878787"/><rect x="208" y="200" width="8" height="3" fill="#d7d7d7"/><rect x="216" y="200" width="8" height="3" fill="#b6b6b6"/><rect x="224" y="200" width="8" height="3" fill="#b8b8b8"/><rect x="232" y="200" width="8" height="3" fill="#737373"/><rect x="240" y="200" width="8" height="3" fill="#888888"/><rect x="248" y="200" width="8" height="3" fill="#a5a5a5"/><rect x="256" y="200" width="8" height="3" fill="#b4b4b4"/><rect x="264" y="200" width="8" height="3" fill="#898989"/><rect x="272" y="200" width="8" height="3" fill="#b5b5b5"/><rect x="280" y="200" width="8" height="3" fill="#aeaeae"/><rect x="288" y="200" width="8" height="3" fill="#d6d6d6"/><rect x="296" y="200" width="8" height="3" fill="#adadad"/><rect x="304" y="200" width="8" height="3" fill="#aeaeae"/><rect x="312" y="200" width="8" height="3" fill="#b5b5b5"/><rect x="320" y="200" width="8" height="3" fill="#acacac"/><rect x="328" y="200" width="8" height="3" fill="#878787"/><rect x="336" y="200" width="8" height="3" fill="#d7d7d7"/><rect x="344" y="200" width="8" height="3" fill="#ababab"/><rect x="352" y="200" width="8" height="3" fill="#797979"/><rect width="360" height="203" fill="url(#dots)"/></svg>
<div class="a" style="left:876.7px;top:435px;width:1px;height:214px;background:#b0b0b0;"></div>
<div class="a" style="left:1102.5px;top:435px;width:1px;height:214px;background:#a8a8a8;"></div>
<div class="a" style="left:1139.6px;top:435px;width:1px;height:214px;background:#ececec;"></div>
<div class="a" style="left:1177.6px;top:435px;width:1px;height:214px;background:#ececec;"></div>
<div class="a" style="left:1210.6px;top:435px;width:1.4px;height:214px;background:#a0a0a0;"></div>
<div class="a" style="left:877px;top:648.5px;width:334.5px;height:1px;background:#999;"></div>
<div class="t" style="left:909px;top:436px;font-size:5.20px;font-weight:400;color:#2a2a2a;transform:scaleX(0.8653846153846153);">DYL-006m1</div>
<div class="t" style="left:952px;top:443px;font-size:5.80px;font-weight:400;color:#050505;transform:scaleX(0.8879310344827587);">6000.10301</div>
<div class="t" style="left:1052px;top:436px;font-size:6.30px;font-weight:400;color:#050505;transform:scaleX(0.7380952380952381);">09/02/25</div>
<div class="t" style="left:1048px;top:443px;font-size:6.30px;font-weight:400;color:#050505;transform:scaleX(0.8920634920634921);">6000.10301</div>
<div class="t" style="left:879px;top:468px;font-size:6.50px;font-weight:400;color:#050505;transform:scaleX(0.8046153846153847);">2.000</div>
<div class="t" style="left:909px;top:468px;font-size:6.40px;font-weight:400;color:#050505;transform:scaleX(0.8218749999999999);">COs, AsBlts, Non Turnkey, Wood</div>
<div class="t" style="left:1023px;top:469px;font-size:6.30px;font-weight:400;color:#050505;transform:scaleX(0.9142857142857143);">Node: 00416213</div>
<div class="t" style="left:1081.5px;top:468px;font-size:6.30px;font-weight:400;color:#050505;transform:scaleX(0.807936507936508);">2149864</div>
<div class="t" style="left:1121px;top:468px;font-size:6.30px;font-weight:400;color:#050505;transform:scaleX(0.7936507936507937);">1</div>
<div class="t" style="left:1151.3px;top:469px;font-size:5.80px;font-weight:400;color:#050505;transform:scaleX(0.8017241379310346);">200.0000EA</div>
<div class="t" style="left:1193.5px;top:469px;font-size:5.80px;font-weight:400;color:#050505;transform:scaleX(0.8172413793103449);">250.00</div>
<div class="t" style="left:909px;top:480px;font-size:5.20px;font-weight:400;color:#2a2a2a;transform:scaleX(0.8653846153846153);">DYL-006m1</div>
<div class="t" style="left:952px;top:486px;font-size:5.80px;font-weight:400;color:#050505;transform:scaleX(0.8879310344827587);">6000.10321</div>
<div class="t" style="left:1052px;top:479px;font-size:6.30px;font-weight:400;color:#050505;transform:scaleX(0.7380952380952381);">09/02/25</div>
<div class="t" style="left:1048px;top:486px;font-size:6.30px;font-weight:400;color:#050505;transform:scaleX(0.8920634920634921);">6000.10321</div>
<div class="t" style="left:879px;top:512px;font-size:6.50px;font-weight:400;color:#050505;transform:scaleX(0.8046153846153847);">3.000</div>
<div class="t" style="left:909px;top:512px;font-size:6.40px;font-weight:400;color:#050505;transform:scaleX(0.84375);">IKE Pole Loading Analysis</div>
<div class="t" style="left:1023px;top:512px;font-size:6.30px;font-weight:400;color:#050505;transform:scaleX(0.9142857142857143);">Node: 00416213</div>
<div class="t" style="left:1081.5px;top:512px;font-size:6.30px;font-weight:400;color:#050505;transform:scaleX(0.807936507936508);">2149864</div>
<div class="t" style="left:1121px;top:512px;font-size:6.30px;font-weight:400;color:#050505;transform:scaleX(0.7936507936507937);">1</div>
<div class="t" style="left:1151.3px;top:512px;font-size:5.80px;font-weight:400;color:#050505;transform:scaleX(0.8017241379310346);">125.0000EA</div>
<div class="t" style="left:1193.5px;top:512px;font-size:5.80px;font-weight:400;color:#050505;transform:scaleX(0.8172413793103449);">125.00</div>
<div class="t" style="left:909px;top:523px;font-size:5.20px;font-weight:400;color:#2a2a2a;transform:scaleX(0.8653846153846153);">DYL-006m1</div>
<div class="t" style="left:952px;top:530px;font-size:5.80px;font-weight:400;color:#050505;transform:scaleX(0.8879310344827587);">6000.10114</div>
<div class="t" style="left:1052px;top:522px;font-size:6.30px;font-weight:400;color:#050505;transform:scaleX(0.7380952380952381);">09/02/25</div>
<div class="t" style="left:1048px;top:530px;font-size:6.30px;font-weight:400;color:#050505;transform:scaleX(0.8920634920634921);">6000.10114</div>
<div class="t" style="left:879px;top:556px;font-size:6.50px;font-weight:400;color:#050505;transform:scaleX(0.8046153846153847);">4.000</div>
<div class="t" style="left:909px;top:556px;font-size:6.40px;font-weight:400;color:#050505;transform:scaleX(0.8296874999999999);">Pole Loading for Wood Pole</div>
<div class="t" style="left:1023px;top:556px;font-size:6.30px;font-weight:400;color:#050505;transform:scaleX(0.9142857142857143);">Node: 00416213</div>
<div class="t" style="left:1081.5px;top:556px;font-size:6.30px;font-weight:400;color:#050505;transform:scaleX(0.807936507936508);">2149864</div>
<div class="t" style="left:1121px;top:556px;font-size:6.30px;font-weight:400;color:#050505;transform:scaleX(0.7936507936507937);">1</div>
<div class="t" style="left:1151.3px;top:556px;font-size:5.80px;font-weight:400;color:#050505;transform:scaleX(0.8017241379310346);">335.0000EA</div>
<div class="t" style="left:1193.5px;top:556px;font-size:5.80px;font-weight:400;color:#050505;transform:scaleX(0.8172413793103449);">335.00</div>
<div class="t" style="left:909px;top:567px;font-size:5.20px;font-weight:400;color:#2a2a2a;transform:scaleX(0.8653846153846153);">DYL-006m1</div>
<div class="t" style="left:952px;top:573px;font-size:5.80px;font-weight:400;color:#050505;transform:scaleX(0.8879310344827587);">6000.10101</div>
<div class="t" style="left:1052px;top:566px;font-size:6.30px;font-weight:400;color:#050505;transform:scaleX(0.7380952380952381);">09/02/25</div>
<div class="t" style="left:1048px;top:573px;font-size:6.30px;font-weight:400;color:#050505;transform:scaleX(0.8920634920634921);">6000.10101</div>
<div class="t" style="left:879px;top:599px;font-size:6.50px;font-weight:400;color:#050505;transform:scaleX(0.8046153846153847);">5.000</div>
<div class="t" style="left:909px;top:599px;font-size:6.40px;font-weight:400;color:#050505;transform:scaleX(0.8171875000000001);">Site Survey, Util. Pole,Strand</div>
<div class="t" style="left:1023px;top:600px;font-size:6.30px;font-weight:400;color:#050505;transform:scaleX(0.9142857142857143);">Node: 00416213</div>
<div class="t" style="left:1081.5px;top:599px;font-size:6.30px;font-weight:400;color:#050505;transform:scaleX(0.807936507936508);">2149864</div>
<div class="t" style="left:1121px;top:599px;font-size:6.30px;font-weight:400;color:#050505;transform:scaleX(0.7936507936507937);">1</div>
<div class="t" style="left:1151.3px;top:600px;font-size:5.80px;font-weight:400;color:#050505;transform:scaleX(0.8017241379310346);">475.0000EA</div>
<div class="t" style="left:1193.5px;top:600px;font-size:5.80px;font-weight:400;color:#050505;transform:scaleX(0.8172413793103449);">475.00</div>
<div class="t" style="left:909px;top:611px;font-size:5.20px;font-weight:400;color:#2a2a2a;transform:scaleX(0.8653846153846153);">DYL-006m1</div>
<div class="t" style="left:952px;top:617px;font-size:5.80px;font-weight:400;color:#050505;transform:scaleX(0.8879310344827587);">6000.10004</div>
<div class="t" style="left:1052px;top:610px;font-size:6.30px;font-weight:400;color:#050505;transform:scaleX(0.7380952380952381);">09/02/25</div>
<div class="t" style="left:1048px;top:617px;font-size:6.30px;font-weight:400;color:#050505;transform:scaleX(0.8920634920634921);">6000.10004</div>
<div class="t" style="left:878px;top:629px;font-size:6.60px;font-weight:400;color:#050505;transform:scaleX(0.8);">Requestor: &nbsp;Domenick Tullio</div>
<div class="a" style="left:877px;top:648.5px;width:334.5px;height:29.5px;border:1px solid #888;border-top:none;border-radius:0 0 4px 4px"></div>
<div class="a" style="left:878.5px;top:650.7px;width:332px;height:6px;font-size:5.8px;line-height:6px;font-weight:700;color:#111;white-space:nowrap;overflow:hidden;text-align:justify;text-align-last:justify">Contracts are awarded by Company based solely upon the merits of the respective proposal. Company does not expect,</div>
<div class="a" style="left:878.5px;top:656.7px;width:332px;height:6px;font-size:5.8px;line-height:6px;font-weight:700;color:#111;white-space:nowrap;overflow:hidden;text-align:justify;text-align-last:justify">nor does it desire, that suppliers provide meals, transportation, entertainment, or gifts, to be considered for awards. If</div>
<div class="a" style="left:878.5px;top:662.6px;width:332px;height:6px;font-size:5.8px;line-height:6px;font-weight:700;color:#111;white-space:nowrap;overflow:hidden;text-align:justify;text-align-last:justify">you are solicited or feel undue pressure to provide additional considerations in order to receive contracts from</div>
<div class="a" style="left:878.5px;top:668.6px;width:332px;height:6px;font-size:5.8px;line-height:6px;font-weight:700;color:#111;white-space:nowrap;overflow:hidden;text-align:left;text-align-last:left">Company, please contact our Ethics Hotline at 1-877-874-8416.</div>
<div class="t" style="left:1026px;top:681px;font-size:6.30px;font-weight:400;color:#333;transform:scaleX(0.8809523809523809);">PAGE</div>
<div class="t" style="left:1050.5px;top:680px;font-size:6.30px;font-weight:400;color:#333;transform:scaleX(0.7936507936507937);">1</div>
<div class="t" style="left:1064px;top:681px;font-size:6.30px;font-weight:400;color:#333;transform:scaleX(0.7936507936507937);">OF</div>
<div class="t" style="left:1075.5px;top:680px;font-size:6.30px;font-weight:400;color:#333;transform:scaleX(0.7936507936507937);">3</div>
<svg style="left:997px;top:703px" width="5" height="8" viewBox="0 0 5 8"><path d="M4.5 0.5L1 4l3.5 3.5" fill="none" stroke="#5a5a5a" stroke-width="0.9"/></svg>
<div class="a" style="left:1018px;top:698px;width:35px;height:19px;background:#1b1b1b;border-radius:2px"></div>
<div class="t" style="left:1025.5px;top:704px;font-size:9.20px;font-weight:400;color:#e8e8e8;transform:scaleX(0.8695652173913044);">1</div>
<div class="t" style="left:1057.5px;top:704px;font-size:9.20px;font-weight:400;color:#e0e0e0;transform:scaleX(0.8695652173913044);">of 3</div>
<svg style="left:1087px;top:703px" width="5" height="8" viewBox="0 0 5 8"><path d="M0.5 0.5L4 4 0.5 7.5" fill="none" stroke="#bdbdbd" stroke-width="0.9"/></svg>
<svg style="left:1163px;top:702px" width="10" height="10" viewBox="0 0 10 10"><circle cx="4" cy="4" r="3.3" fill="none" stroke="#cfcfcf" stroke-width="0.9"/><path d="M6.5 6.5L9.5 9.5M2.5 4h3M4 2.5v3" stroke="#cfcfcf" stroke-width="0.9"/></svg>
<svg style="left:1183px;top:702px" width="10" height="10" viewBox="0 0 10 10"><circle cx="4" cy="4" r="3.3" fill="none" stroke="#cfcfcf" stroke-width="0.9"/><path d="M6.5 6.5L9.5 9.5M2.5 4h3" stroke="#cfcfcf" stroke-width="0.9"/></svg>
<svg style="left:1202px;top:702px" width="10" height="10" viewBox="0 0 10 10"><circle cx="5" cy="5" r="2.6" fill="none" stroke="#cfcfcf" stroke-width="0.9"/><path d="M3.8 1.3L5 0.2 6.2 1.3M3.8 8.7L5 9.8 6.2 8.7M1.3 3.8L0.2 5 1.3 6.2M8.7 3.8L9.8 5 8.7 6.2" fill="none" stroke="#cfcfcf" stroke-width="0.9"/></svg>
<svg style="left:1222px;top:702px" width="10" height="10" viewBox="0 0 10 10"><path d="M2 2.5A4 4 0 1 1 4.5 9.5" fill="none" stroke="#cfcfcf" stroke-width="0.9"/><path d="M0.8 0.5L2 2.7 4.2 2" fill="none" stroke="#cfcfcf" stroke-width="0.9"/><circle cx="5" cy="5.5" r="0.7" fill="#cfcfcf"/></svg>
<div class="a" style="left:1269px;top:71px;width:184px;height:105px;overflow:hidden;background:radial-gradient(ellipse 80% 95% at 65% 38%,#2350a0 0%,#1c4690 35%,#153878 65%,#0e2658 100%)">
<svg style="left:0;top:0" width="184" height="105" viewBox="0 0 184 105">
<defs><linearGradient id="sh" x1="0" y1="0" x2="1" y2="0"><stop offset="0" stop-color="#7886a4"/><stop offset="0.35" stop-color="#a6b2c8"/><stop offset="0.6" stop-color="#b0bbd0"/><stop offset="1" stop-color="#8190ae"/></linearGradient>
<radialGradient id="fc" cx="0.5" cy="0.4" r="0.65"><stop offset="0" stop-color="#d2ad98"/><stop offset="0.7" stop-color="#bf957e"/><stop offset="1" stop-color="#9a705c"/></radialGradient>
<linearGradient id="bd" x1="0" y1="0" x2="0" y2="1"><stop offset="0" stop-color="#a57a62" stop-opacity="0"/><stop offset="0.35" stop-color="#946650"/><stop offset="1" stop-color="#7a503c"/></linearGradient></defs>
<path d="M37 105 C39 90 45 79 58 73 L86 65 Q103 76 120 65 L146 74 C154 80 157 92 157 105 Z" fill="url(#sh)"/>
<path d="M58 74 C51 83 48 94 47 105 L56 105 C58 95 61 86 66 78Z" fill="#6c7b9a" opacity="0.6"/>
<path d="M88 64 L103 86 L118 64 L112 58 L94 58Z" fill="#b4bfd4"/>
<path d="M92 64 L103 86 L96 68Z" fill="#8896b2"/>
<path d="M103 86 L103 105" stroke="#8090ac" stroke-width="0.7"/>
<circle cx="103" cy="93" r="0.9" fill="#e8eef6"/>
<ellipse cx="84.5" cy="48" rx="3" ry="6" fill="#b08672"/>
<ellipse cx="121.5" cy="48" rx="3" ry="6" fill="#b08672"/>
<ellipse cx="103" cy="46" rx="18.5" ry="25" fill="url(#fc)"/>
<path d="M84.5 46 C85 63 93 73 103 73.5 C113 73 121 63 121.5 46 C119 54 113 57 103 57 C93 57 87 54 84.5 46Z" fill="url(#bd)"/>
<path d="M96 61.5 Q103 60.5 110 61.5" fill="none" stroke="#6e4634" stroke-width="1.3"/>
<path d="M82.5 41 C80 24 89 14 103 14 C117 14 126 24 123.5 41 C122 32 119 27 114 26 C108 28 98 28 91 26 C86 28 84 33 82.5 41Z" fill="#45352c"/>
<rect x="86.5" y="41" width="13.5" height="8" rx="3" fill="none" stroke="#3a3232" stroke-width="1.2"/>
<rect x="106" y="41" width="13.5" height="8" rx="3" fill="none" stroke="#3a3232" stroke-width="1.2"/>
<path d="M100 43.5h6" stroke="#3a3232" stroke-width="1"/>
<path d="M146.5 22 L161 9" stroke="#fff" stroke-width="2" stroke-linecap="round"/>
<path d="M149 15 L154 28 M154 17 L150 26" stroke="#e8eef8" stroke-width="1.4"/>
<text x="135.5" y="34.5" font-family="Liberation Sans" font-weight="700" font-size="5.8" fill="#fff" textLength="38" lengthAdjust="spacingAndGlyphs">XPERTECHS</text>
<path d="M136 37.3h37" stroke="#aab8d4" stroke-width="0.6" stroke-dasharray="1.2 0.8"/>
<path d="M123 92 l3 -5 M123 88l2 4" stroke="#2a7ad8" stroke-width="1.2"/>
</svg></div>
<div class="a" style="left:1275.2px;top:225px;width:91px;height:19.5px;background:#6466ae;border-radius:3px"></div>
<div class="t" style="left:1279.4px;top:228px;font-size:12.80px;font-weight:400;color:#f4f4ff;transform:scaleX(0.9765625);-webkit-text-stroke:0.3px #f4f4ff">McClain Butler</div>
</body></html>
